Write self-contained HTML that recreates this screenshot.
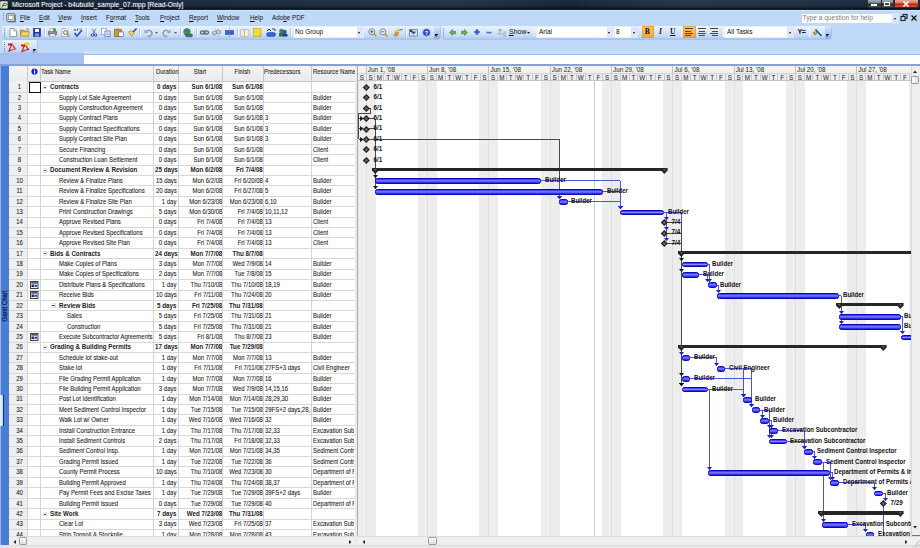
<!DOCTYPE html><html><head><meta charset="utf-8"><style>
*{margin:0;padding:0;box-sizing:border-box}
html,body{width:920px;height:548px;overflow:hidden;background:#c1d9f8;font-family:"Liberation Sans",sans-serif;position:relative}
.a{position:absolute}
svg.a{overflow:visible}
.t{position:absolute;white-space:nowrap;font-size:6px;color:#1a1a1a;line-height:10px}
.b{font-weight:bold}
.r{text-align:right}
.c{text-align:center}
.tt{font-size:6.5px;color:#222;transform:scaleX(.915);transform-origin:0 50%;-webkit-text-stroke:0.08px #222}
.tt.r{transform-origin:100% 50%}
.tt.c{transform-origin:50% 50%}
.tt.b{-webkit-text-stroke:0;transform:scaleX(.955)}

</style></head><body>
<div class="a" style="left:0;top:0;width:920px;height:10.2px;background:linear-gradient(#1f2f45,#1a293d 55%,#0c1524 85%,#1a2838)"></div>
<div class="a" style="left:0;top:0;width:920px;height:8px;background:linear-gradient(90deg,rgba(0,0,0,.15),rgba(255,255,255,0) 20%,rgba(255,255,255,.04) 50%,rgba(0,0,0,.1) 62%,rgba(255,255,255,.05) 75%,rgba(0,0,0,0))"></div>
<svg class="a" style="left:0.3px;top:0.8px" width="8" height="8" viewBox="0 0 8 8"><rect x="0.2" y="0.2" width="7.4" height="7.4" rx="0.8" fill="#dfe6cf"/><path d="M2 6.5L3.5 2.5H5.5A1 1 0 0 1 5.5 4.5H3" fill="none" stroke="#4a5a3a" stroke-width="1"/><path d="M0.5 7.2H7.5" stroke="#9aa88a" stroke-width="0.6"/></svg>
<div class="t" style="left:12px;top:0.3px;font-size:6.75px;color:#fff;line-height:10px;text-shadow:0 0 1.5px #567">Microsoft Project - b4ubuild_sample_07.mpp [Read-Only]</div>
<div class="a" style="left:867px;top:0;width:27px;height:8px;background:linear-gradient(#a8b0b8,#7a8490 40%,#202830 58%,#4a5560);border-radius:0 0 0 3px;border:0.6px solid #2a3038;border-top:0"></div>
<div class="a" style="left:880.5px;top:0;width:0.6px;height:8px;background:#1a2030"></div>
<div class="a" style="left:894px;top:0;width:25px;height:8px;background:linear-gradient(#eaa898,#dc7866 40%,#c01e0c 58%,#d05a48);border-radius:0 0 3px 0;border:0.6px solid #502020;border-top:0"></div>
<div class="a" style="left:871px;top:4.2px;width:6px;height:1.8px;background:#fff"></div>
<div class="a" style="left:884px;top:1.8px;width:5.5px;height:4.5px;border:1px solid #fff;border-top-width:1.5px"></div>
<svg class="a" style="left:902px;top:1px" width="8" height="6" viewBox="0 0 8 6"><path d="M1.5 0.5L6.5 5.5M6.5 0.5L1.5 5.5" stroke="#fff" stroke-width="1.6"/></svg>
<div class="a" style="left:0;top:10px;width:920px;height:14px;background:#c1d9f8"></div>
<div class="a" style="left:0;top:10.2px;width:920px;height:1.2px;background:#cfe3fb"></div>
<div class="t" style="left:20px;top:12.8px;font-size:7px;color:#111;line-height:10px;text-decoration-thickness:.5px;transform:scaleX(.9);transform-origin:0 50%"><u>F</u>ile</div>
<div class="t" style="left:38.6px;top:12.8px;font-size:7px;color:#111;line-height:10px;text-decoration-thickness:.5px;transform:scaleX(.9);transform-origin:0 50%"><u>E</u>dit</div>
<div class="t" style="left:58.2px;top:12.8px;font-size:7px;color:#111;line-height:10px;text-decoration-thickness:.5px;transform:scaleX(.9);transform-origin:0 50%"><u>V</u>iew</div>
<div class="t" style="left:80.7px;top:12.8px;font-size:7px;color:#111;line-height:10px;text-decoration-thickness:.5px;transform:scaleX(.9);transform-origin:0 50%"><u>I</u>nsert</div>
<div class="t" style="left:105.7px;top:12.8px;font-size:7px;color:#111;line-height:10px;text-decoration-thickness:.5px;transform:scaleX(.9);transform-origin:0 50%">F<u>o</u>rmat</div>
<div class="t" style="left:135.2px;top:12.8px;font-size:7px;color:#111;line-height:10px;text-decoration-thickness:.5px;transform:scaleX(.9);transform-origin:0 50%"><u>T</u>ools</div>
<div class="t" style="left:159.6px;top:12.8px;font-size:7px;color:#111;line-height:10px;text-decoration-thickness:.5px;transform:scaleX(.9);transform-origin:0 50%"><u>P</u>roject</div>
<div class="t" style="left:188.8px;top:12.8px;font-size:7px;color:#111;line-height:10px;text-decoration-thickness:.5px;transform:scaleX(.9);transform-origin:0 50%"><u>R</u>eport</div>
<div class="t" style="left:216.6px;top:12.8px;font-size:7px;color:#111;line-height:10px;text-decoration-thickness:.5px;transform:scaleX(.9);transform-origin:0 50%"><u>W</u>indow</div>
<div class="t" style="left:249.6px;top:12.8px;font-size:7px;color:#111;line-height:10px;text-decoration-thickness:.5px;transform:scaleX(.9);transform-origin:0 50%"><u>H</u>elp</div>
<div class="t" style="left:272px;top:12.8px;font-size:7px;color:#111;line-height:10px;text-decoration-thickness:.5px;transform:scaleX(.9);transform-origin:0 50%">Ado<u>b</u>e PDF</div>
<div class="a" style="left:3px;top:13px;width:1px;height:8px;background-image:linear-gradient(#7a90b0 50%,transparent 50%);background-size:1px 2px"></div>
<svg class="a" style="left:6px;top:12.5px" width="11" height="10" viewBox="0 0 11 10"><rect x="2" y="2" width="8" height="7.5" rx="0.8" fill="#7a90c0"/><rect x="0.8" y="0.8" width="8" height="7.5" rx="0.8" fill="#eef0e8" stroke="#3a4450" stroke-width="0.8"/><rect x="2.6" y="2.6" width="4.4" height="3.8" fill="#fff" stroke="#6a7a50" stroke-width="0.6"/><circle cx="3.6" cy="2.4" r="0.8" fill="#e0c040"/></svg>
<div class="a" style="left:801px;top:12.5px;width:91.5px;height:11px;background:#fff;border:0.5px solid #c6d6ee"></div>
<div class="t" style="left:802.5px;top:13.3px;font-size:6.6px;color:#7e7e7e;line-height:10px">Type a question for help</div>
<div class="a" style="left:892px;top:12.5px;width:7px;height:11px;background:#d7e5f8"></div>
<div class="a" style="left:894px;top:17.5px;width:0;height:0;border-left:1.6px solid transparent;border-right:1.6px solid transparent;border-top:2px solid #222"></div>
<svg class="a" style="left:900px;top:13px" width="8" height="9" viewBox="0 0 8 9"><rect x="3" y="1.5" width="4" height="4" fill="none" stroke="#222" stroke-width="1.1"/><rect x="1" y="3.5" width="4" height="4" fill="#c1d9f8" stroke="#222" stroke-width="1.1"/></svg>
<svg class="a" style="left:910px;top:14px" width="8" height="8" viewBox="0 0 8 8"><path d="M1.5 1.5L6.5 6.5M6.5 1.5L1.5 6.5" stroke="#111" stroke-width="1.3"/></svg>
<div class="a" style="left:0;top:24px;width:920px;height:30px;background:#c1d9f8"></div>
<div class="a" style="left:2px;top:25.5px;width:438px;height:13.0px;background:linear-gradient(#eaf3fe,#d6e6fb 45%,#c2d8f5 80%,#aac5ee);border-radius:2px;box-shadow:0.5px 0.5px 0 #90aee0"></div>
<div class="a" style="left:441px;top:25.5px;width:390px;height:13.0px;background:linear-gradient(#eaf3fe,#d6e6fb 45%,#c2d8f5 80%,#aac5ee);border-radius:2px;box-shadow:0.5px 0.5px 0 #90aee0"></div>
<div class="a" style="left:2px;top:40px;width:35px;height:13.299999999999997px;background:linear-gradient(#eaf3fe,#d6e6fb 45%,#c2d8f5 80%,#aac5ee);border-radius:2px;box-shadow:0.5px 0.5px 0 #90aee0"></div>
<div class="a" style="left:4px;top:27.5px;width:1px;height:9px;background-image:linear-gradient(#6f87ac 50%,transparent 50%);background-size:1px 2px"></div>
<div class="a" style="left:443px;top:27.5px;width:1px;height:9px;background-image:linear-gradient(#6f87ac 50%,transparent 50%);background-size:1px 2px"></div>
<div class="a" style="left:4px;top:42px;width:1px;height:9px;background-image:linear-gradient(#6f87ac 50%,transparent 50%);background-size:1px 2px"></div>
<div class="a" style="left:434px;top:26px;width:5.5px;height:12.5px;background:linear-gradient(#dae8fb,#8eaee2);border-radius:0 2px 2px 0"></div>
<div class="a" style="left:435.2px;top:35.0px;width:0;height:0;border-left:1.6px solid transparent;border-right:1.6px solid transparent;border-top:2px solid #111"></div>
<div class="a" style="left:435.2px;top:33.8px;width:3.2px;height:0.6px;background:#111"></div>
<div class="a" style="left:825px;top:26px;width:5.5px;height:12.5px;background:linear-gradient(#dae8fb,#8eaee2);border-radius:0 2px 2px 0"></div>
<div class="a" style="left:826.2px;top:35.0px;width:0;height:0;border-left:1.6px solid transparent;border-right:1.6px solid transparent;border-top:2px solid #111"></div>
<div class="a" style="left:826.2px;top:33.8px;width:3.2px;height:0.6px;background:#111"></div>
<div class="a" style="left:32px;top:47.5px;width:5.5px;height:5.8px;background:linear-gradient(#dae8fb,#8eaee2);border-radius:0 2px 2px 0"></div>
<div class="a" style="left:33.2px;top:49.8px;width:0;height:0;border-left:1.6px solid transparent;border-right:1.6px solid transparent;border-top:2px solid #111"></div>
<div class="a" style="left:33.2px;top:48.599999999999994px;width:3.2px;height:0.6px;background:#111"></div>
<div class="a" style="left:44.4px;top:28px;width:0.7px;height:9px;background:#b2c8ea"></div>
<div class="a" style="left:45.1px;top:28px;width:0.6px;height:9px;background:#fff"></div>
<div class="a" style="left:86px;top:28px;width:0.7px;height:9px;background:#b2c8ea"></div>
<div class="a" style="left:86.7px;top:28px;width:0.6px;height:9px;background:#fff"></div>
<div class="a" style="left:139.4px;top:28px;width:0.7px;height:9px;background:#b2c8ea"></div>
<div class="a" style="left:140.1px;top:28px;width:0.6px;height:9px;background:#fff"></div>
<div class="a" style="left:180px;top:28px;width:0.7px;height:9px;background:#b2c8ea"></div>
<div class="a" style="left:180.7px;top:28px;width:0.6px;height:9px;background:#fff"></div>
<div class="a" style="left:196px;top:28px;width:0.7px;height:9px;background:#b2c8ea"></div>
<div class="a" style="left:196.7px;top:28px;width:0.6px;height:9px;background:#fff"></div>
<div class="a" style="left:237px;top:28px;width:0.7px;height:9px;background:#b2c8ea"></div>
<div class="a" style="left:237.7px;top:28px;width:0.6px;height:9px;background:#fff"></div>
<div class="a" style="left:290px;top:28px;width:0.7px;height:9px;background:#b2c8ea"></div>
<div class="a" style="left:290.7px;top:28px;width:0.6px;height:9px;background:#fff"></div>
<div class="a" style="left:405px;top:28px;width:0.7px;height:9px;background:#b2c8ea"></div>
<div class="a" style="left:405.7px;top:28px;width:0.6px;height:9px;background:#fff"></div>
<div class="a" style="left:533.7px;top:28px;width:0.7px;height:9px;background:#b2c8ea"></div>
<div class="a" style="left:534.4000000000001px;top:28px;width:0.6px;height:9px;background:#fff"></div>
<div class="a" style="left:680.6px;top:28px;width:0.7px;height:9px;background:#b2c8ea"></div>
<div class="a" style="left:681.3000000000001px;top:28px;width:0.6px;height:9px;background:#fff"></div>
<div class="a" style="left:722.5px;top:28px;width:0.7px;height:9px;background:#b2c8ea"></div>
<div class="a" style="left:723.2px;top:28px;width:0.6px;height:9px;background:#fff"></div>
<div class="a" style="left:808.7px;top:28px;width:0.7px;height:9px;background:#b2c8ea"></div>
<div class="a" style="left:809.4000000000001px;top:28px;width:0.6px;height:9px;background:#fff"></div>
<svg class="a" style="left:8.5px;top:27.8px" width="8" height="9" viewBox="0 0 8 9"><path d="M1 0.5h4l2.5 2.5v5.5h-6.5z" fill="#fff" stroke="#7a7a7a" stroke-width="0.7"/><path d="M5 0.5v2.5h2.5" fill="#ddd" stroke="#7a7a7a" stroke-width="0.5"/></svg>
<svg class="a" style="left:19.5px;top:27.8px" width="10" height="9" viewBox="0 0 10 9"><path d="M0.5 2h3l1 1h4v5h-8z" fill="#e8b030" stroke="#9a7010" stroke-width="0.6"/><path d="M1.5 4h8l-1.5 4h-7.5z" fill="#f8d868" stroke="#b08020" stroke-width="0.5"/><path d="M6 1.5l2-1 1 2" fill="none" stroke="#4a8a30" stroke-width="0.7"/></svg>
<svg class="a" style="left:33px;top:27.8px" width="8" height="9" viewBox="0 0 8 9"><rect x="0.5" y="0.5" width="7" height="8" fill="#2838a8" stroke="#182070" stroke-width="0.6"/><rect x="2" y="1" width="4" height="3" fill="#fff"/><rect x="2" y="5.5" width="4" height="3" fill="#8898c8"/></svg>
<svg class="a" style="left:48px;top:27.8px" width="9" height="9" viewBox="0 0 9 9"><rect x="0.5" y="3" width="8" height="4" rx="1" fill="#909090" stroke="#505050" stroke-width="0.6"/><rect x="2" y="0.8" width="5" height="2.5" fill="#fff" stroke="#777" stroke-width="0.5"/><rect x="2" y="6" width="5" height="2.5" fill="#fff" stroke="#777" stroke-width="0.5"/><circle cx="6.5" cy="2" r="1.8" fill="#48a040"/></svg>
<svg class="a" style="left:61px;top:27.8px" width="9" height="9" viewBox="0 0 9 9"><path d="M1 0.5h4l2 2v6h-6z" fill="#fff" stroke="#888" stroke-width="0.6"/><circle cx="4.5" cy="4.5" r="2" fill="#e8eef8" stroke="#555" stroke-width="0.8"/><path d="M6 6l2.5 2.5" stroke="#c09020" stroke-width="1.3"/></svg>
<svg class="a" style="left:73px;top:27.8px" width="10" height="9" viewBox="0 0 10 9"><path d="M1 2.5l1-1.5 1 1.5M1.3 2h1.4M4 1h1.5M4.5 1v2M6.5 1h2" stroke="#333" stroke-width="0.6" fill="none"/><path d="M1.5 5l2.5 3 5-6" fill="none" stroke="#2a48c0" stroke-width="1.5"/></svg>
<svg class="a" style="left:90.5px;top:27.8px" width="6" height="9" viewBox="0 0 6 9"><path d="M1 0.5l3 5M5 0.5l-3 5" stroke="#555" stroke-width="0.7"/><circle cx="1.5" cy="7" r="1.3" fill="none" stroke="#2040b0" stroke-width="0.9"/><circle cx="4.5" cy="7" r="1.3" fill="none" stroke="#2040b0" stroke-width="0.9"/></svg>
<svg class="a" style="left:101px;top:27.8px" width="10" height="9" viewBox="0 0 10 9"><rect x="0.5" y="0.5" width="5" height="6" fill="#fff" stroke="#888" stroke-width="0.6"/><rect x="4" y="3" width="5" height="5.5" fill="#fff" stroke="#3a5ab8" stroke-width="0.7"/><path d="M5 5h3M5 6.5h3" stroke="#3a5ab8" stroke-width="0.5"/></svg>
<svg class="a" style="left:113.7px;top:27.8px" width="10" height="9" viewBox="0 0 10 9"><rect x="0.5" y="1.5" width="7" height="7" fill="#d89828" stroke="#805010" stroke-width="0.6"/><rect x="2" y="0.5" width="3" height="2" fill="#888"/><rect x="4.5" y="4" width="5" height="4.5" fill="#fff" stroke="#555" stroke-width="0.6"/></svg>
<svg class="a" style="left:127.5px;top:27.8px" width="9" height="9" viewBox="0 0 9 9"><path d="M0.5 4l3 4.5 3-3-3-3z" fill="#f0d060" stroke="#a08020" stroke-width="0.6"/><path d="M5 4l3.5-3.5" stroke="#2838a0" stroke-width="1.5"/></svg>
<svg class="a" style="left:143.7px;top:27.8px" width="9" height="9" viewBox="0 0 9 9"><path d="M2.5 3.5a3 3 0 1 1 1 4.5" fill="none" stroke="#8c9cb8" stroke-width="1.4"/><path d="M0.5 1.5v3.5h3.5z" fill="#8c9cb8"/></svg>
<svg class="a" style="left:155px;top:31.5px" width="3" height="2" viewBox="0 0 3 2"><path d="M0 0h3l-1.5 1.8z" fill="#556"/></svg>
<svg class="a" style="left:162px;top:27.8px" width="9" height="9" viewBox="0 0 9 9"><path d="M6.5 3.5a3 3 0 1 0 -1 4.5" fill="none" stroke="#8c9cb8" stroke-width="1.4"/><path d="M8.5 1.5v3.5h-3.5z" fill="#8c9cb8"/></svg>
<svg class="a" style="left:174px;top:31.5px" width="3" height="2" viewBox="0 0 3 2"><path d="M0 0h3l-1.5 1.8z" fill="#556"/></svg>
<svg class="a" style="left:183px;top:27.8px" width="10" height="9" viewBox="0 0 10 9"><circle cx="4" cy="3.8" r="3.3" fill="#38a048" stroke="#206030" stroke-width="0.5"/><path d="M1.5 2.5c1.5 1 3 0 5 1" stroke="#2a6ad0" stroke-width="1.2" fill="none"/><rect x="2.5" y="6" width="7" height="2.8" rx="1.4" fill="#5a6a88" stroke="#334" stroke-width="0.5"/></svg>
<svg class="a" style="left:200px;top:27.8px" width="9" height="9" viewBox="0 0 9 9"><ellipse cx="2.8" cy="4.5" rx="2.3" ry="1.6" fill="none" stroke="#5a6478" stroke-width="1.2"/><ellipse cx="6.2" cy="4.5" rx="2.3" ry="1.6" fill="none" stroke="#5a6478" stroke-width="1.2"/></svg>
<svg class="a" style="left:212px;top:27.8px" width="9" height="9" viewBox="0 0 9 9"><ellipse cx="2.5" cy="5" rx="2" ry="1.5" fill="none" stroke="#8a92a4" stroke-width="1.1"/><ellipse cx="6.5" cy="4" rx="2" ry="1.5" fill="none" stroke="#8a92a4" stroke-width="1.1"/><path d="M3 0.5l1 2M6 0.5l-1 2M2 8.5l1-1.5M7 8.5l-1-1.5" stroke="#8a92a4" stroke-width="0.6"/></svg>
<svg class="a" style="left:224.5px;top:27.8px" width="9" height="9" viewBox="0 0 9 9"><rect x="0.5" y="2.5" width="3.5" height="4" fill="#3a62c8" stroke="#203a88" stroke-width="0.5"/><rect x="5" y="2.5" width="3.5" height="4" fill="#3a62c8" stroke="#203a88" stroke-width="0.5"/><path d="M4.5 0v9" stroke="#334" stroke-width="0.5" stroke-dasharray="1 1"/></svg>
<svg class="a" style="left:240px;top:27.8px" width="9" height="9" viewBox="0 0 9 9"><path d="M0.5 1.5h3.8v7h-3.8zM4.5 1.5h3.8v7h-3.8z" fill="#f4f0e8" stroke="#b0a898" stroke-width="0.6"/></svg>
<svg class="a" style="left:253px;top:27.8px" width="9" height="9" viewBox="0 0 9 9"><rect x="0.5" y="0.5" width="7.5" height="8" fill="#f8d838" stroke="#c0a010" stroke-width="0.6"/><path d="M5.5 8.5l2.5-2.5v2.5z" fill="#e0b010"/></svg>
<svg class="a" style="left:265.5px;top:27.8px" width="10" height="9" viewBox="0 0 10 9"><path d="M1 3l2-2 2 2" fill="none" stroke="#222" stroke-width="1"/><path d="M6 1h3v2" fill="none" stroke="#222" stroke-width="0.8"/><rect x="0.5" y="4.5" width="9" height="4" rx="2" fill="#2a6ae0" stroke="#1a3a90" stroke-width="0.5"/></svg>
<svg class="a" style="left:278px;top:27.8px" width="10" height="9" viewBox="0 0 10 9"><circle cx="3.5" cy="3" r="2.3" fill="#38904a"/><circle cx="6.5" cy="4" r="2.3" fill="#3a5aa8"/><rect x="1" y="5" width="5" height="3.5" fill="#2a7038"/><rect x="5" y="6" width="4.5" height="2.5" fill="#2a3a90"/></svg>
<svg class="a" style="left:367.5px;top:27.8px" width="9" height="9" viewBox="0 0 9 9"><circle cx="3.8" cy="3.8" r="3" fill="#f0f4f8" stroke="#707a88" stroke-width="0.9"/><path d="M2.2 3.8h3.2M3.8 2.2v3.2" stroke="#2848a8" stroke-width="0.9"/><path d="M6 6l2.3 2.3" stroke="#d0a010" stroke-width="1.8"/></svg>
<svg class="a" style="left:379px;top:27.8px" width="9" height="9" viewBox="0 0 9 9"><circle cx="3.8" cy="3.8" r="3" fill="#f0f4f8" stroke="#707a88" stroke-width="0.9"/><path d="M2.2 3.8h3.2" stroke="#2848a8" stroke-width="0.9"/><path d="M6 6l2.3 2.3" stroke="#d0a010" stroke-width="1.8"/></svg>
<svg class="a" style="left:392.5px;top:27.8px" width="10" height="9" viewBox="0 0 10 9"><path d="M1 8l2-5 3 2-2 3z" fill="#d8a020" stroke="#907010" stroke-width="0.5"/><path d="M4 2.5l5.5-1" stroke="#3a5ab8" stroke-width="1.2"/><path d="M3 4l4-3" stroke="#f0c040" stroke-width="1.4"/></svg>
<svg class="a" style="left:408.7px;top:27.8px" width="9" height="9" viewBox="0 0 9 9"><rect x="0.5" y="1.5" width="8" height="6.5" fill="#dde4f0" stroke="#606878" stroke-width="0.7"/><path d="M1.5 3.5l3 3 3-3" fill="#3050b8"/><rect x="1" y="2" width="2.5" height="2" fill="#344"/></svg>
<svg class="a" style="left:421.5px;top:27.8px" width="9" height="9" viewBox="0 0 9 9"><circle cx="4.5" cy="4.5" r="3.8" fill="#2a4ac8" stroke="#9ab0e0" stroke-width="0.8"/><text x="4.5" y="6.6" font-size="5.5" font-family="Liberation Sans" font-weight="bold" fill="#fff" text-anchor="middle">?</text></svg>
<svg class="a" style="left:448.5px;top:29px" width="7" height="7" viewBox="0 0 7 7"><path d="M0.5 3.5l3-3v1.7h3v2.6h-3v1.7z" fill="#6ab048" stroke="#3a7020" stroke-width="0.5"/></svg>
<svg class="a" style="left:461px;top:29px" width="7" height="7" viewBox="0 0 7 7"><path d="M6.5 3.5l-3-3v1.7h-3v2.6h3v1.7z" fill="#6ab048" stroke="#3a7020" stroke-width="0.5"/></svg>
<svg class="a" style="left:473.5px;top:29.2px" width="6" height="6" viewBox="0 0 6 6"><path d="M2.2 0.5h1.6v1.7h1.7v1.6h-1.7v1.7h-1.6v-1.7h-1.7v-1.6h1.7z" fill="#2a5ad8" stroke="#1a3a98" stroke-width="0.4"/></svg>
<svg class="a" style="left:486.3px;top:29px" width="6" height="7" viewBox="0 0 6 7"><rect x="0.5" y="2.8" width="5" height="1.6" fill="#4a70d0"/></svg>
<svg class="a" style="left:497px;top:27.8px" width="10" height="9" viewBox="0 0 10 9"><path d="M1 3l2-2 2 2M3 1v4M0.5 6h5" stroke="#8a96aa" stroke-width="0.8" fill="none"/><path d="M6 4h3M6 6h3M6 8h3" stroke="#8a96aa" stroke-width="0.7"/></svg>
<div class="t" style="left:509px;top:27.3px;font-size:7px;color:#111;line-height:10px"><u>S</u>how</div>
<svg class="a" style="left:526.5px;top:31.5px" width="3" height="2" viewBox="0 0 3 2"><path d="M0 0h3l-1.5 1.8z" fill="#111"/></svg>
<div class="a" style="left:292.5px;top:26.2px;width:71px;height:12px;background:#fff;box-shadow:inset 0 0 0 0.5px #d4e0f0"></div>
<div class="t" style="left:295.0px;top:27.4px;font-size:7px;color:#111;line-height:10px;transform:scaleX(.93);transform-origin:0 50%">No Group</div>
<div class="a" style="left:356.5px;top:26.7px;width:6.5px;height:11px;background:#dbe8fa"></div>
<div class="a" style="left:358.2px;top:31.799999999999997px;width:0;height:0;border-left:1.6px solid transparent;border-right:1.6px solid transparent;border-top:2px solid #111"></div>
<div class="a" style="left:536px;top:26.2px;width:77.5px;height:12px;background:#fff;box-shadow:inset 0 0 0 0.5px #d4e0f0"></div>
<div class="t" style="left:538.5px;top:27.4px;font-size:7px;color:#111;line-height:10px;transform:scaleX(.93);transform-origin:0 50%">Arial</div>
<div class="a" style="left:606.5px;top:26.7px;width:6.5px;height:11px;background:#dbe8fa"></div>
<div class="a" style="left:608.2px;top:31.799999999999997px;width:0;height:0;border-left:1.6px solid transparent;border-right:1.6px solid transparent;border-top:2px solid #111"></div>
<div class="a" style="left:613.7px;top:26.2px;width:24.3px;height:12px;background:#fff;box-shadow:inset 0 0 0 0.5px #d4e0f0"></div>
<div class="t" style="left:616.2px;top:27.4px;font-size:7px;color:#111;line-height:10px;transform:scaleX(.93);transform-origin:0 50%">8</div>
<div class="a" style="left:631.0px;top:26.7px;width:6.5px;height:11px;background:#dbe8fa"></div>
<div class="a" style="left:632.7px;top:31.799999999999997px;width:0;height:0;border-left:1.6px solid transparent;border-right:1.6px solid transparent;border-top:2px solid #111"></div>
<div class="a" style="left:724px;top:26.2px;width:70px;height:12px;background:#fff;box-shadow:inset 0 0 0 0.5px #d4e0f0"></div>
<div class="t" style="left:726.5px;top:27.4px;font-size:7px;color:#111;line-height:10px;transform:scaleX(.93);transform-origin:0 50%">All Tasks</div>
<div class="a" style="left:787px;top:26.7px;width:6.5px;height:11px;background:#dbe8fa"></div>
<div class="a" style="left:788.7px;top:31.799999999999997px;width:0;height:0;border-left:1.6px solid transparent;border-right:1.6px solid transparent;border-top:2px solid #111"></div>
<div class="a" style="left:642px;top:26.2px;width:12px;height:12px;background:linear-gradient(#fcc46a,#f6a43a);box-shadow:inset 0 0 0 .5px #e0902a"></div>
<div class="t" style="left:644.8px;top:27.3px;font-size:7.5px;color:#111;line-height:10px;font-family:'Liberation Serif';font-weight:bold">B</div>
<div class="t" style="left:659px;top:27.3px;font-size:7.5px;color:#111;line-height:10px;font-style:italic;font-family:'Liberation Serif';font-weight:bold">I</div>
<div class="t" style="left:670px;top:27.3px;font-size:7.5px;color:#111;line-height:10px;text-decoration:underline;font-family:'Liberation Serif';font-weight:bold">U</div>
<div class="a" style="left:683px;top:26.2px;width:12.6px;height:12px;background:linear-gradient(#fcc46a,#f6a43a);box-shadow:inset 0 0 0 .5px #e0902a"></div>
<div class="a" style="left:685.3px;top:28.40px;width:7.5px;height:1.1px;background:#4a4a4a"></div>
<div class="a" style="left:685.3px;top:30.50px;width:5.5px;height:1.1px;background:#4a4a4a"></div>
<div class="a" style="left:685.3px;top:32.60px;width:7.5px;height:1.1px;background:#4a4a4a"></div>
<div class="a" style="left:685.3px;top:34.70px;width:5.5px;height:1.1px;background:#4a4a4a"></div>
<div class="a" style="left:698px;top:28.40px;width:7.5px;height:1.1px;background:#4a4a4a"></div>
<div class="a" style="left:699px;top:30.50px;width:5.5px;height:1.1px;background:#4a4a4a"></div>
<div class="a" style="left:698px;top:32.60px;width:7.5px;height:1.1px;background:#4a4a4a"></div>
<div class="a" style="left:699px;top:34.70px;width:5.5px;height:1.1px;background:#4a4a4a"></div>
<div class="a" style="left:710.3px;top:28.40px;width:7.5px;height:1.1px;background:#4a4a4a"></div>
<div class="a" style="left:712.3px;top:30.50px;width:5.5px;height:1.1px;background:#4a4a4a"></div>
<div class="a" style="left:710.3px;top:32.60px;width:7.5px;height:1.1px;background:#4a4a4a"></div>
<div class="a" style="left:712.3px;top:34.70px;width:5.5px;height:1.1px;background:#4a4a4a"></div>
<div class="t" style="left:797.5px;top:27.3px;font-size:7px;color:#111;line-height:10px;font-weight:bold;letter-spacing:-.5px">Y=</div>
<svg class="a" style="left:812px;top:27.8px" width="10" height="9" viewBox="0 0 10 9"><path d="M1 4.5l3.5-3 1.5 2-3.5 3z" fill="#f0c030"/><path d="M1.5 6.5l3-2.5 1 1.5-3 2z" fill="#48b048"/><path d="M3.5 1.5l6 6.5" stroke="#2838a0" stroke-width="1.3"/><path d="M1 5l2-1" stroke="#e04040" stroke-width="1"/></svg>
<svg class="a" style="left:6.5px;top:41.5px" width="10" height="10" viewBox="0 0 10 10"><path d="M1 2.5h5" stroke="#e01010" stroke-width="2"/><path d="M2 9c1-3 2-5 3-7 1 2 2 4 4 5-2 0-5 1-7 2z" fill="none" stroke="#d01818" stroke-width="1.1"/><rect x="5.5" y="1" width="3" height="7" fill="none" stroke="#c8c8c8" stroke-width="0.5"/></svg>
<svg class="a" style="left:19.5px;top:41.5px" width="10" height="10" viewBox="0 0 10 10"><path d="M1 3.5h4" stroke="#e01010" stroke-width="2"/><path d="M2 9.5c1-3 2-5 3-7 1 2 2 4 4 5-2 0-5 1-7 2z" fill="none" stroke="#d01818" stroke-width="1.1"/><ellipse cx="7" cy="2" rx="2.6" ry="1.8" fill="#f4d818"/></svg>
<div class="a" style="left:0;top:53.3px;width:920px;height:12px;background:#a5c2f2"></div>
<div class="a" style="left:83.7px;top:50.8px;width:836.3px;height:2.8px;background:#cde0fa"></div>
<div class="a" style="left:83.7px;top:53.6px;width:836.3px;height:1.6px;background:#9cbcf0"></div>
<div class="a" style="left:83.7px;top:55.3px;width:836.3px;height:9px;background:#fff"></div>
<div class="a" style="left:0;top:64.4px;width:920px;height:1.6px;background:#7ea4e0"></div>
<div class="a" style="left:0;top:66.0px;width:9px;height:479.0px;background:#4a7dd6"></div>
<div class="a" style="left:0;top:66.0px;width:0.7px;height:479.0px;background:#98b4e0"></div>
<div class="t" style="left:-14.3px;top:301.1px;width:38px;font-size:6.5px;color:#0a1a4a;line-height:10px;transform:rotate(-90deg) scaleX(.92);text-align:center;-webkit-text-stroke:.2px #0a1a4a">Gantt Chart</div>
<div class="a" style="left:0;top:395px;width:2.6px;height:31px;background:linear-gradient(90deg,#e8f6ff,#b8dcf0);border-radius:0 1px 1px 0"></div>
<div class="a" style="left:2.6px;top:395px;width:1.4px;height:31px;background:#1a3060"></div>
<div class="a" style="left:9px;top:66.0px;width:346px;height:470.0px;background:#fff"></div>
<div class="a" style="left:9px;top:66.0px;width:346px;height:15.299999999999997px;background:linear-gradient(#f4f4f4,#ebebeb)"></div>
<div class="a" style="left:9px;top:80.8px;width:346px;height:1.2px;background:#c4c4c4"></div>
<div class="a" style="left:27.4px;top:66.0px;width:1px;height:15.299999999999997px;background:#c8c8c8"></div>
<div class="a" style="left:40.1px;top:66.0px;width:1px;height:15.299999999999997px;background:#c8c8c8"></div>
<div class="a" style="left:152.9px;top:66.0px;width:1px;height:15.299999999999997px;background:#c8c8c8"></div>
<div class="t tt" style="left:41.2px;top:66.9px;width:111.5px;text-align:left">Task Name</div>
<div class="a" style="left:177.7px;top:66.0px;width:1px;height:15.299999999999997px;background:#c8c8c8"></div>
<div class="t tt c" style="left:154.7px;top:66.9px;width:22.5px;text-align:center">Duration</div>
<div class="a" style="left:221.6px;top:66.0px;width:1px;height:15.299999999999997px;background:#c8c8c8"></div>
<div class="t tt c" style="left:179.2px;top:66.9px;width:42.0px;text-align:center">Start</div>
<div class="a" style="left:262.7px;top:66.0px;width:1px;height:15.299999999999997px;background:#c8c8c8"></div>
<div class="t tt c" style="left:223.2px;top:66.9px;width:39.0px;text-align:center">Finish</div>
<div class="a" style="left:310.85px;top:66.0px;width:1px;height:15.299999999999997px;background:#c8c8c8"></div>
<div class="t tt" style="left:264.2px;top:66.9px;width:46.5px;text-align:left">Predecessors</div>
<div class="a" style="left:354.7px;top:66.0px;width:1px;height:15.299999999999997px;background:#c8c8c8"></div>
<div class="t tt" style="left:312.7px;top:66.9px;width:41.5px;text-align:left">Resource Name</div>
<svg class="a" style="left:30.5px;top:67.5px" width="7" height="7" viewBox="0 0 7 7"><circle cx="3.5" cy="3.5" r="3.1" fill="#1020e0"/><rect x="3" y="2.6" width="1.1" height="3" fill="#fff"/><rect x="3" y="1.3" width="1.1" height="0.9" fill="#fff"/></svg>
<div class="a" style="left:9px;top:81.3px;width:19px;height:454.7px;background:#f0f0f0"></div>
<div class="a" style="left:9px;top:91.71px;width:346px;height:1px;background:#d8d8d8"></div>
<div class="t tt c" style="left:9.8px;top:82.10px;width:19px">1</div>
<div class="a" style="left:42.6px;top:84.80px;width:4.6px;height:4.6px;border:0.5px solid #e2e2e2;background:#fff"></div>
<div class="a" style="left:43.7px;top:86.75px;width:2.4px;height:0.7px;background:#555"></div>
<div class="t tt b" style="left:50px;top:82.10px">Contracts</div>
<div class="t tt r b" style="left:153.5px;top:82.10px;width:22.4px">0 days</div>
<div class="t tt r b" style="left:178px;top:82.10px;width:44.3px">Sun 6/1/08</div>
<div class="t tt r b" style="left:222.5px;top:82.10px;width:39.8px">Sun 6/1/08</div>
<div class="t tt" style="left:265.4px;top:82.10px;width:50.8px;overflow:hidden"></div>
<div class="t tt" style="left:313.4px;top:82.10px;width:45.4px;overflow:hidden"></div>
<div class="a" style="left:9px;top:102.12px;width:346px;height:1px;background:#d8d8d8"></div>
<div class="t tt c" style="left:9.8px;top:92.51px;width:19px">2</div>
<div class="t tt" style="left:58.6px;top:92.51px">Supply Lot Sale Agreement</div>
<div class="t tt r" style="left:153.5px;top:92.51px;width:22.4px">0 days</div>
<div class="t tt r" style="left:178px;top:92.51px;width:44.3px">Sun 6/1/08</div>
<div class="t tt r" style="left:222.5px;top:92.51px;width:39.8px">Sun 6/1/08</div>
<div class="t tt" style="left:265.4px;top:92.51px;width:50.8px;overflow:hidden"></div>
<div class="t tt" style="left:313.4px;top:92.51px;width:45.4px;overflow:hidden">Builder</div>
<div class="a" style="left:9px;top:112.53px;width:346px;height:1px;background:#d8d8d8"></div>
<div class="t tt c" style="left:9.8px;top:102.92px;width:19px">3</div>
<div class="t tt" style="left:58.6px;top:102.92px">Supply Construction Agreement</div>
<div class="t tt r" style="left:153.5px;top:102.92px;width:22.4px">0 days</div>
<div class="t tt r" style="left:178px;top:102.92px;width:44.3px">Sun 6/1/08</div>
<div class="t tt r" style="left:222.5px;top:102.92px;width:39.8px">Sun 6/1/08</div>
<div class="t tt" style="left:265.4px;top:102.92px;width:50.8px;overflow:hidden"></div>
<div class="t tt" style="left:313.4px;top:102.92px;width:45.4px;overflow:hidden">Builder</div>
<div class="a" style="left:9px;top:122.94px;width:346px;height:1px;background:#d8d8d8"></div>
<div class="t tt c" style="left:9.8px;top:113.33px;width:19px">4</div>
<div class="t tt" style="left:58.6px;top:113.33px">Supply Contract Plans</div>
<div class="t tt r" style="left:153.5px;top:113.33px;width:22.4px">0 days</div>
<div class="t tt r" style="left:178px;top:113.33px;width:44.3px">Sun 6/1/08</div>
<div class="t tt r" style="left:222.5px;top:113.33px;width:39.8px">Sun 6/1/08</div>
<div class="t tt" style="left:265.4px;top:113.33px;width:50.8px;overflow:hidden">3</div>
<div class="t tt" style="left:313.4px;top:113.33px;width:45.4px;overflow:hidden">Builder</div>
<div class="a" style="left:9px;top:133.35px;width:346px;height:1px;background:#d8d8d8"></div>
<div class="t tt c" style="left:9.8px;top:123.74px;width:19px">5</div>
<div class="t tt" style="left:58.6px;top:123.74px">Supply Contract Specifications</div>
<div class="t tt r" style="left:153.5px;top:123.74px;width:22.4px">0 days</div>
<div class="t tt r" style="left:178px;top:123.74px;width:44.3px">Sun 6/1/08</div>
<div class="t tt r" style="left:222.5px;top:123.74px;width:39.8px">Sun 6/1/08</div>
<div class="t tt" style="left:265.4px;top:123.74px;width:50.8px;overflow:hidden">3</div>
<div class="t tt" style="left:313.4px;top:123.74px;width:45.4px;overflow:hidden">Builder</div>
<div class="a" style="left:9px;top:143.76px;width:346px;height:1px;background:#d8d8d8"></div>
<div class="t tt c" style="left:9.8px;top:134.15px;width:19px">6</div>
<div class="t tt" style="left:58.6px;top:134.15px">Supply Contract Site Plan</div>
<div class="t tt r" style="left:153.5px;top:134.15px;width:22.4px">0 days</div>
<div class="t tt r" style="left:178px;top:134.15px;width:44.3px">Sun 6/1/08</div>
<div class="t tt r" style="left:222.5px;top:134.15px;width:39.8px">Sun 6/1/08</div>
<div class="t tt" style="left:265.4px;top:134.15px;width:50.8px;overflow:hidden">3</div>
<div class="t tt" style="left:313.4px;top:134.15px;width:45.4px;overflow:hidden">Builder</div>
<div class="a" style="left:9px;top:154.17px;width:346px;height:1px;background:#d8d8d8"></div>
<div class="t tt c" style="left:9.8px;top:144.56px;width:19px">7</div>
<div class="t tt" style="left:58.6px;top:144.56px">Secure Financing</div>
<div class="t tt r" style="left:153.5px;top:144.56px;width:22.4px">0 days</div>
<div class="t tt r" style="left:178px;top:144.56px;width:44.3px">Sun 6/1/08</div>
<div class="t tt r" style="left:222.5px;top:144.56px;width:39.8px">Sun 6/1/08</div>
<div class="t tt" style="left:265.4px;top:144.56px;width:50.8px;overflow:hidden"></div>
<div class="t tt" style="left:313.4px;top:144.56px;width:45.4px;overflow:hidden">Client</div>
<div class="a" style="left:9px;top:164.58px;width:346px;height:1px;background:#d8d8d8"></div>
<div class="t tt c" style="left:9.8px;top:154.97px;width:19px">8</div>
<div class="t tt" style="left:58.6px;top:154.97px">Construction Loan Settlement</div>
<div class="t tt r" style="left:153.5px;top:154.97px;width:22.4px">0 days</div>
<div class="t tt r" style="left:178px;top:154.97px;width:44.3px">Sun 6/1/08</div>
<div class="t tt r" style="left:222.5px;top:154.97px;width:39.8px">Sun 6/1/08</div>
<div class="t tt" style="left:265.4px;top:154.97px;width:50.8px;overflow:hidden"></div>
<div class="t tt" style="left:313.4px;top:154.97px;width:45.4px;overflow:hidden">Client</div>
<div class="a" style="left:9px;top:174.99px;width:346px;height:1px;background:#d8d8d8"></div>
<div class="t tt c" style="left:9.8px;top:165.38px;width:19px">9</div>
<div class="a" style="left:42.6px;top:168.08px;width:4.6px;height:4.6px;border:0.5px solid #e2e2e2;background:#fff"></div>
<div class="a" style="left:43.7px;top:170.03px;width:2.4px;height:0.7px;background:#555"></div>
<div class="t tt b" style="left:50px;top:165.38px">Document Review & Revision</div>
<div class="t tt r b" style="left:153.5px;top:165.38px;width:22.4px">25 days</div>
<div class="t tt r b" style="left:178px;top:165.38px;width:44.3px">Mon 6/2/08</div>
<div class="t tt r b" style="left:222.5px;top:165.38px;width:39.8px">Fri 7/4/08</div>
<div class="t tt" style="left:265.4px;top:165.38px;width:50.8px;overflow:hidden"></div>
<div class="t tt" style="left:313.4px;top:165.38px;width:45.4px;overflow:hidden"></div>
<div class="a" style="left:9px;top:185.40px;width:346px;height:1px;background:#d8d8d8"></div>
<div class="t tt c" style="left:9.8px;top:175.79px;width:19px">10</div>
<div class="t tt" style="left:58.6px;top:175.79px">Review & Finalize Plans</div>
<div class="t tt r" style="left:153.5px;top:175.79px;width:22.4px">15 days</div>
<div class="t tt r" style="left:178px;top:175.79px;width:44.3px">Mon 6/2/08</div>
<div class="t tt r" style="left:222.5px;top:175.79px;width:39.8px">Fri 6/20/08</div>
<div class="t tt" style="left:265.4px;top:175.79px;width:50.8px;overflow:hidden">4</div>
<div class="t tt" style="left:313.4px;top:175.79px;width:45.4px;overflow:hidden">Builder</div>
<div class="a" style="left:9px;top:195.81px;width:346px;height:1px;background:#d8d8d8"></div>
<div class="t tt c" style="left:9.8px;top:186.20px;width:19px">11</div>
<div class="t tt" style="left:58.6px;top:186.20px">Review & Finalize Specifications</div>
<div class="t tt r" style="left:153.5px;top:186.20px;width:22.4px">20 days</div>
<div class="t tt r" style="left:178px;top:186.20px;width:44.3px">Mon 6/2/08</div>
<div class="t tt r" style="left:222.5px;top:186.20px;width:39.8px">Fri 6/27/08</div>
<div class="t tt" style="left:265.4px;top:186.20px;width:50.8px;overflow:hidden">5</div>
<div class="t tt" style="left:313.4px;top:186.20px;width:45.4px;overflow:hidden">Builder</div>
<div class="a" style="left:9px;top:206.22px;width:346px;height:1px;background:#d8d8d8"></div>
<div class="t tt c" style="left:9.8px;top:196.61px;width:19px">12</div>
<div class="t tt" style="left:58.6px;top:196.61px">Review & Finalize Site Plan</div>
<div class="t tt r" style="left:153.5px;top:196.61px;width:22.4px">1 day</div>
<div class="t tt r" style="left:178px;top:196.61px;width:44.3px">Mon 6/23/08</div>
<div class="t tt r" style="left:222.5px;top:196.61px;width:39.8px">Mon 6/23/08</div>
<div class="t tt" style="left:265.4px;top:196.61px;width:50.8px;overflow:hidden">6,10</div>
<div class="t tt" style="left:313.4px;top:196.61px;width:45.4px;overflow:hidden">Builder</div>
<div class="a" style="left:9px;top:216.63px;width:346px;height:1px;background:#d8d8d8"></div>
<div class="t tt c" style="left:9.8px;top:207.02px;width:19px">13</div>
<div class="t tt" style="left:58.6px;top:207.02px">Print Construction Drawings</div>
<div class="t tt r" style="left:153.5px;top:207.02px;width:22.4px">5 days</div>
<div class="t tt r" style="left:178px;top:207.02px;width:44.3px">Mon 6/30/08</div>
<div class="t tt r" style="left:222.5px;top:207.02px;width:39.8px">Fri 7/4/08</div>
<div class="t tt" style="left:265.4px;top:207.02px;width:50.8px;overflow:hidden">10,11,12</div>
<div class="t tt" style="left:313.4px;top:207.02px;width:45.4px;overflow:hidden">Builder</div>
<div class="a" style="left:9px;top:227.04px;width:346px;height:1px;background:#d8d8d8"></div>
<div class="t tt c" style="left:9.8px;top:217.43px;width:19px">14</div>
<div class="t tt" style="left:58.6px;top:217.43px">Approve Revised Plans</div>
<div class="t tt r" style="left:153.5px;top:217.43px;width:22.4px">0 days</div>
<div class="t tt r" style="left:178px;top:217.43px;width:44.3px">Fri 7/4/08</div>
<div class="t tt r" style="left:222.5px;top:217.43px;width:39.8px">Fri 7/4/08</div>
<div class="t tt" style="left:265.4px;top:217.43px;width:50.8px;overflow:hidden">13</div>
<div class="t tt" style="left:313.4px;top:217.43px;width:45.4px;overflow:hidden">Client</div>
<div class="a" style="left:9px;top:237.45px;width:346px;height:1px;background:#d8d8d8"></div>
<div class="t tt c" style="left:9.8px;top:227.84px;width:19px">15</div>
<div class="t tt" style="left:58.6px;top:227.84px">Approve Revised Specifications</div>
<div class="t tt r" style="left:153.5px;top:227.84px;width:22.4px">0 days</div>
<div class="t tt r" style="left:178px;top:227.84px;width:44.3px">Fri 7/4/08</div>
<div class="t tt r" style="left:222.5px;top:227.84px;width:39.8px">Fri 7/4/08</div>
<div class="t tt" style="left:265.4px;top:227.84px;width:50.8px;overflow:hidden">13</div>
<div class="t tt" style="left:313.4px;top:227.84px;width:45.4px;overflow:hidden">Client</div>
<div class="a" style="left:9px;top:247.86px;width:346px;height:1px;background:#d8d8d8"></div>
<div class="t tt c" style="left:9.8px;top:238.25px;width:19px">16</div>
<div class="t tt" style="left:58.6px;top:238.25px">Approve Revised Site Plan</div>
<div class="t tt r" style="left:153.5px;top:238.25px;width:22.4px">0 days</div>
<div class="t tt r" style="left:178px;top:238.25px;width:44.3px">Fri 7/4/08</div>
<div class="t tt r" style="left:222.5px;top:238.25px;width:39.8px">Fri 7/4/08</div>
<div class="t tt" style="left:265.4px;top:238.25px;width:50.8px;overflow:hidden">13</div>
<div class="t tt" style="left:313.4px;top:238.25px;width:45.4px;overflow:hidden">Client</div>
<div class="a" style="left:9px;top:258.27px;width:346px;height:1px;background:#d8d8d8"></div>
<div class="t tt c" style="left:9.8px;top:248.66px;width:19px">17</div>
<div class="a" style="left:42.6px;top:251.36px;width:4.6px;height:4.6px;border:0.5px solid #e2e2e2;background:#fff"></div>
<div class="a" style="left:43.7px;top:253.31px;width:2.4px;height:0.7px;background:#555"></div>
<div class="t tt b" style="left:50px;top:248.66px">Bids & Contracts</div>
<div class="t tt r b" style="left:153.5px;top:248.66px;width:22.4px">24 days</div>
<div class="t tt r b" style="left:178px;top:248.66px;width:44.3px">Mon 7/7/08</div>
<div class="t tt r b" style="left:222.5px;top:248.66px;width:39.8px">Thu 8/7/08</div>
<div class="t tt" style="left:265.4px;top:248.66px;width:50.8px;overflow:hidden"></div>
<div class="t tt" style="left:313.4px;top:248.66px;width:45.4px;overflow:hidden"></div>
<div class="a" style="left:9px;top:268.68px;width:346px;height:1px;background:#d8d8d8"></div>
<div class="t tt c" style="left:9.8px;top:259.07px;width:19px">18</div>
<div class="t tt" style="left:58.6px;top:259.07px">Make Copies of Plans</div>
<div class="t tt r" style="left:153.5px;top:259.07px;width:22.4px">3 days</div>
<div class="t tt r" style="left:178px;top:259.07px;width:44.3px">Mon 7/7/08</div>
<div class="t tt r" style="left:222.5px;top:259.07px;width:39.8px">Wed 7/9/08</div>
<div class="t tt" style="left:265.4px;top:259.07px;width:50.8px;overflow:hidden">14</div>
<div class="t tt" style="left:313.4px;top:259.07px;width:45.4px;overflow:hidden">Builder</div>
<div class="a" style="left:9px;top:279.09px;width:346px;height:1px;background:#d8d8d8"></div>
<div class="t tt c" style="left:9.8px;top:269.48px;width:19px">19</div>
<div class="t tt" style="left:58.6px;top:269.48px">Make Copies of Specifications</div>
<div class="t tt r" style="left:153.5px;top:269.48px;width:22.4px">2 days</div>
<div class="t tt r" style="left:178px;top:269.48px;width:44.3px">Mon 7/7/08</div>
<div class="t tt r" style="left:222.5px;top:269.48px;width:39.8px">Tue 7/8/08</div>
<div class="t tt" style="left:265.4px;top:269.48px;width:50.8px;overflow:hidden">15</div>
<div class="t tt" style="left:313.4px;top:269.48px;width:45.4px;overflow:hidden">Builder</div>
<div class="a" style="left:9px;top:289.50px;width:346px;height:1px;background:#d8d8d8"></div>
<div class="t tt c" style="left:9.8px;top:279.89px;width:19px">20</div>
<div class="t tt" style="left:58.6px;top:279.89px">Distribute Plans & Specifications</div>
<div class="t tt r" style="left:153.5px;top:279.89px;width:22.4px">1 day</div>
<div class="t tt r" style="left:178px;top:279.89px;width:44.3px">Thu 7/10/08</div>
<div class="t tt r" style="left:222.5px;top:279.89px;width:39.8px">Thu 7/10/08</div>
<div class="t tt" style="left:265.4px;top:279.89px;width:50.8px;overflow:hidden">18,19</div>
<div class="t tt" style="left:313.4px;top:279.89px;width:45.4px;overflow:hidden">Builder</div>
<svg class="a" style="left:30.3px;top:280.89px" width="8.5" height="8" viewBox="0 0 8.5 8"><rect x="0.5" y="0.5" width="7.5" height="7" fill="#eef0f6" stroke="#2a3040" stroke-width="0.9"/><rect x="1.3" y="1.2" width="6" height="1.4" fill="#2a3a6a"/><rect x="1.5" y="3.5" width="2.5" height="2.5" fill="#333"/><rect x="4.5" y="3.8" width="2.5" height="2" fill="#2040d0"/></svg>
<div class="a" style="left:9px;top:299.91px;width:346px;height:1px;background:#d8d8d8"></div>
<div class="t tt c" style="left:9.8px;top:290.30px;width:19px">21</div>
<div class="t tt" style="left:58.6px;top:290.30px">Receive Bids</div>
<div class="t tt r" style="left:153.5px;top:290.30px;width:22.4px">10 days</div>
<div class="t tt r" style="left:178px;top:290.30px;width:44.3px">Fri 7/11/08</div>
<div class="t tt r" style="left:222.5px;top:290.30px;width:39.8px">Thu 7/24/08</div>
<div class="t tt" style="left:265.4px;top:290.30px;width:50.8px;overflow:hidden">20</div>
<div class="t tt" style="left:313.4px;top:290.30px;width:45.4px;overflow:hidden">Builder</div>
<svg class="a" style="left:30.3px;top:291.30px" width="8.5" height="8" viewBox="0 0 8.5 8"><rect x="0.5" y="0.5" width="7.5" height="7" fill="#eef0f6" stroke="#2a3040" stroke-width="0.9"/><rect x="1.3" y="1.2" width="6" height="1.4" fill="#2a3a6a"/><rect x="1.5" y="3.5" width="2.5" height="2.5" fill="#333"/><rect x="4.5" y="3.8" width="2.5" height="2" fill="#2040d0"/></svg>
<div class="a" style="left:9px;top:310.32px;width:346px;height:1px;background:#d8d8d8"></div>
<div class="t tt c" style="left:9.8px;top:300.71px;width:19px">22</div>
<div class="a" style="left:51.1px;top:303.41px;width:4.6px;height:4.6px;border:0.5px solid #e2e2e2;background:#fff"></div>
<div class="a" style="left:52.2px;top:305.36px;width:2.4px;height:0.7px;background:#555"></div>
<div class="t tt b" style="left:58.6px;top:300.71px">Review Bids</div>
<div class="t tt r b" style="left:153.5px;top:300.71px;width:22.4px">5 days</div>
<div class="t tt r b" style="left:178px;top:300.71px;width:44.3px">Fri 7/25/08</div>
<div class="t tt r b" style="left:222.5px;top:300.71px;width:39.8px">Thu 7/31/08</div>
<div class="t tt" style="left:265.4px;top:300.71px;width:50.8px;overflow:hidden"></div>
<div class="t tt" style="left:313.4px;top:300.71px;width:45.4px;overflow:hidden"></div>
<div class="a" style="left:9px;top:320.73px;width:346px;height:1px;background:#d8d8d8"></div>
<div class="t tt c" style="left:9.8px;top:311.12px;width:19px">23</div>
<div class="t tt" style="left:67.4px;top:311.12px">Sales</div>
<div class="t tt r" style="left:153.5px;top:311.12px;width:22.4px">5 days</div>
<div class="t tt r" style="left:178px;top:311.12px;width:44.3px">Fri 7/25/08</div>
<div class="t tt r" style="left:222.5px;top:311.12px;width:39.8px">Thu 7/31/08</div>
<div class="t tt" style="left:265.4px;top:311.12px;width:50.8px;overflow:hidden">21</div>
<div class="t tt" style="left:313.4px;top:311.12px;width:45.4px;overflow:hidden">Builder</div>
<div class="a" style="left:9px;top:331.14px;width:346px;height:1px;background:#d8d8d8"></div>
<div class="t tt c" style="left:9.8px;top:321.53px;width:19px">24</div>
<div class="t tt" style="left:67.4px;top:321.53px">Construction</div>
<div class="t tt r" style="left:153.5px;top:321.53px;width:22.4px">5 days</div>
<div class="t tt r" style="left:178px;top:321.53px;width:44.3px">Fri 7/25/08</div>
<div class="t tt r" style="left:222.5px;top:321.53px;width:39.8px">Thu 7/31/08</div>
<div class="t tt" style="left:265.4px;top:321.53px;width:50.8px;overflow:hidden">21</div>
<div class="t tt" style="left:313.4px;top:321.53px;width:45.4px;overflow:hidden">Builder</div>
<div class="a" style="left:9px;top:341.55px;width:346px;height:1px;background:#d8d8d8"></div>
<div class="t tt c" style="left:9.8px;top:331.94px;width:19px">25</div>
<div class="t tt" style="left:58.6px;top:331.94px">Execute Subcontractor Agreements</div>
<div class="t tt r" style="left:153.5px;top:331.94px;width:22.4px">5 days</div>
<div class="t tt r" style="left:178px;top:331.94px;width:44.3px">Fri 8/1/08</div>
<div class="t tt r" style="left:222.5px;top:331.94px;width:39.8px">Thu 8/7/08</div>
<div class="t tt" style="left:265.4px;top:331.94px;width:50.8px;overflow:hidden">23</div>
<div class="t tt" style="left:313.4px;top:331.94px;width:45.4px;overflow:hidden">Builder</div>
<svg class="a" style="left:30.3px;top:332.94px" width="8.5" height="8" viewBox="0 0 8.5 8"><rect x="0.5" y="0.5" width="7.5" height="7" fill="#eef0f6" stroke="#2a3040" stroke-width="0.9"/><rect x="1.3" y="1.2" width="6" height="1.4" fill="#2a3a6a"/><rect x="1.5" y="3.5" width="2.5" height="2.5" fill="#333"/><rect x="4.5" y="3.8" width="2.5" height="2" fill="#2040d0"/></svg>
<div class="a" style="left:9px;top:351.96px;width:346px;height:1px;background:#d8d8d8"></div>
<div class="t tt c" style="left:9.8px;top:342.35px;width:19px">26</div>
<div class="a" style="left:42.6px;top:345.05px;width:4.6px;height:4.6px;border:0.5px solid #e2e2e2;background:#fff"></div>
<div class="a" style="left:43.7px;top:347.00px;width:2.4px;height:0.7px;background:#555"></div>
<div class="t tt b" style="left:50px;top:342.35px">Grading & Building Permits</div>
<div class="t tt r b" style="left:153.5px;top:342.35px;width:22.4px">17 days</div>
<div class="t tt r b" style="left:178px;top:342.35px;width:44.3px">Mon 7/7/08</div>
<div class="t tt r b" style="left:222.5px;top:342.35px;width:39.8px">Tue 7/29/08</div>
<div class="t tt" style="left:265.4px;top:342.35px;width:50.8px;overflow:hidden"></div>
<div class="t tt" style="left:313.4px;top:342.35px;width:45.4px;overflow:hidden"></div>
<div class="a" style="left:9px;top:362.37px;width:346px;height:1px;background:#d8d8d8"></div>
<div class="t tt c" style="left:9.8px;top:352.76px;width:19px">27</div>
<div class="t tt" style="left:58.6px;top:352.76px">Schedule lot stake-out</div>
<div class="t tt r" style="left:153.5px;top:352.76px;width:22.4px">1 day</div>
<div class="t tt r" style="left:178px;top:352.76px;width:44.3px">Mon 7/7/08</div>
<div class="t tt r" style="left:222.5px;top:352.76px;width:39.8px">Mon 7/7/08</div>
<div class="t tt" style="left:265.4px;top:352.76px;width:50.8px;overflow:hidden">13</div>
<div class="t tt" style="left:313.4px;top:352.76px;width:45.4px;overflow:hidden">Builder</div>
<div class="a" style="left:9px;top:372.78px;width:346px;height:1px;background:#d8d8d8"></div>
<div class="t tt c" style="left:9.8px;top:363.17px;width:19px">28</div>
<div class="t tt" style="left:58.6px;top:363.17px">Stake lot</div>
<div class="t tt r" style="left:153.5px;top:363.17px;width:22.4px">1 day</div>
<div class="t tt r" style="left:178px;top:363.17px;width:44.3px">Fri 7/11/08</div>
<div class="t tt r" style="left:222.5px;top:363.17px;width:39.8px">Fri 7/11/08</div>
<div class="t tt" style="left:265.4px;top:363.17px;width:50.8px;overflow:hidden">27FS+3 days</div>
<div class="t tt" style="left:313.4px;top:363.17px;width:45.4px;overflow:hidden">Civil Engineer</div>
<div class="a" style="left:9px;top:383.19px;width:346px;height:1px;background:#d8d8d8"></div>
<div class="t tt c" style="left:9.8px;top:373.58px;width:19px">29</div>
<div class="t tt" style="left:58.6px;top:373.58px">File Grading Permit Application</div>
<div class="t tt r" style="left:153.5px;top:373.58px;width:22.4px">1 day</div>
<div class="t tt r" style="left:178px;top:373.58px;width:44.3px">Mon 7/7/08</div>
<div class="t tt r" style="left:222.5px;top:373.58px;width:39.8px">Mon 7/7/08</div>
<div class="t tt" style="left:265.4px;top:373.58px;width:50.8px;overflow:hidden">16</div>
<div class="t tt" style="left:313.4px;top:373.58px;width:45.4px;overflow:hidden">Builder</div>
<div class="a" style="left:9px;top:393.60px;width:346px;height:1px;background:#d8d8d8"></div>
<div class="t tt c" style="left:9.8px;top:383.99px;width:19px">30</div>
<div class="t tt" style="left:58.6px;top:383.99px">File Building Permit Application</div>
<div class="t tt r" style="left:153.5px;top:383.99px;width:22.4px">3 days</div>
<div class="t tt r" style="left:178px;top:383.99px;width:44.3px">Mon 7/7/08</div>
<div class="t tt r" style="left:222.5px;top:383.99px;width:39.8px">Wed 7/9/08</div>
<div class="t tt" style="left:265.4px;top:383.99px;width:50.8px;overflow:hidden">14,15,16</div>
<div class="t tt" style="left:313.4px;top:383.99px;width:45.4px;overflow:hidden">Builder</div>
<div class="a" style="left:9px;top:404.01px;width:346px;height:1px;background:#d8d8d8"></div>
<div class="t tt c" style="left:9.8px;top:394.40px;width:19px">31</div>
<div class="t tt" style="left:58.6px;top:394.40px">Post Lot Identification</div>
<div class="t tt r" style="left:153.5px;top:394.40px;width:22.4px">1 day</div>
<div class="t tt r" style="left:178px;top:394.40px;width:44.3px">Mon 7/14/08</div>
<div class="t tt r" style="left:222.5px;top:394.40px;width:39.8px">Mon 7/14/08</div>
<div class="t tt" style="left:265.4px;top:394.40px;width:50.8px;overflow:hidden">28,29,30</div>
<div class="t tt" style="left:313.4px;top:394.40px;width:45.4px;overflow:hidden">Builder</div>
<div class="a" style="left:9px;top:414.42px;width:346px;height:1px;background:#d8d8d8"></div>
<div class="t tt c" style="left:9.8px;top:404.81px;width:19px">32</div>
<div class="t tt" style="left:58.6px;top:404.81px">Meet Sediment Control Inspector</div>
<div class="t tt r" style="left:153.5px;top:404.81px;width:22.4px">1 day</div>
<div class="t tt r" style="left:178px;top:404.81px;width:44.3px">Tue 7/15/08</div>
<div class="t tt r" style="left:222.5px;top:404.81px;width:39.8px">Tue 7/15/08</div>
<div class="t tt" style="left:265.4px;top:404.81px;width:50.8px;overflow:hidden">29FS+2 days,28,</div>
<div class="t tt" style="left:313.4px;top:404.81px;width:45.4px;overflow:hidden">Builder</div>
<div class="a" style="left:9px;top:424.83px;width:346px;height:1px;background:#d8d8d8"></div>
<div class="t tt c" style="left:9.8px;top:415.22px;width:19px">33</div>
<div class="t tt" style="left:58.6px;top:415.22px">Walk Lot w/ Owner</div>
<div class="t tt r" style="left:153.5px;top:415.22px;width:22.4px">1 day</div>
<div class="t tt r" style="left:178px;top:415.22px;width:44.3px">Wed 7/16/08</div>
<div class="t tt r" style="left:222.5px;top:415.22px;width:39.8px">Wed 7/16/08</div>
<div class="t tt" style="left:265.4px;top:415.22px;width:50.8px;overflow:hidden">32</div>
<div class="t tt" style="left:313.4px;top:415.22px;width:45.4px;overflow:hidden">Builder</div>
<div class="a" style="left:9px;top:435.24px;width:346px;height:1px;background:#d8d8d8"></div>
<div class="t tt c" style="left:9.8px;top:425.63px;width:19px">34</div>
<div class="t tt" style="left:58.6px;top:425.63px">Install Construction Entrance</div>
<div class="t tt r" style="left:153.5px;top:425.63px;width:22.4px">1 day</div>
<div class="t tt r" style="left:178px;top:425.63px;width:44.3px">Thu 7/17/08</div>
<div class="t tt r" style="left:222.5px;top:425.63px;width:39.8px">Thu 7/17/08</div>
<div class="t tt" style="left:265.4px;top:425.63px;width:50.8px;overflow:hidden">32,33</div>
<div class="t tt" style="left:313.4px;top:425.63px;width:45.4px;overflow:hidden">Excavation Sub</div>
<div class="a" style="left:9px;top:445.65px;width:346px;height:1px;background:#d8d8d8"></div>
<div class="t tt c" style="left:9.8px;top:436.04px;width:19px">35</div>
<div class="t tt" style="left:58.6px;top:436.04px">Install Sediment Controls</div>
<div class="t tt r" style="left:153.5px;top:436.04px;width:22.4px">2 days</div>
<div class="t tt r" style="left:178px;top:436.04px;width:44.3px">Thu 7/17/08</div>
<div class="t tt r" style="left:222.5px;top:436.04px;width:39.8px">Fri 7/18/08</div>
<div class="t tt" style="left:265.4px;top:436.04px;width:50.8px;overflow:hidden">32,33</div>
<div class="t tt" style="left:313.4px;top:436.04px;width:45.4px;overflow:hidden">Excavation Sub</div>
<div class="a" style="left:9px;top:456.06px;width:346px;height:1px;background:#d8d8d8"></div>
<div class="t tt c" style="left:9.8px;top:446.45px;width:19px">36</div>
<div class="t tt" style="left:58.6px;top:446.45px">Sediment Control Insp.</div>
<div class="t tt r" style="left:153.5px;top:446.45px;width:22.4px">1 day</div>
<div class="t tt r" style="left:178px;top:446.45px;width:44.3px">Mon 7/21/08</div>
<div class="t tt r" style="left:222.5px;top:446.45px;width:39.8px">Mon 7/21/08</div>
<div class="t tt" style="left:265.4px;top:446.45px;width:50.8px;overflow:hidden">34,35</div>
<div class="t tt" style="left:313.4px;top:446.45px;width:45.4px;overflow:hidden">Sediment Contr</div>
<div class="a" style="left:9px;top:466.47px;width:346px;height:1px;background:#d8d8d8"></div>
<div class="t tt c" style="left:9.8px;top:456.86px;width:19px">37</div>
<div class="t tt" style="left:58.6px;top:456.86px">Grading Permit Issued</div>
<div class="t tt r" style="left:153.5px;top:456.86px;width:22.4px">1 day</div>
<div class="t tt r" style="left:178px;top:456.86px;width:44.3px">Tue 7/22/08</div>
<div class="t tt r" style="left:222.5px;top:456.86px;width:39.8px">Tue 7/22/08</div>
<div class="t tt" style="left:265.4px;top:456.86px;width:50.8px;overflow:hidden">36</div>
<div class="t tt" style="left:313.4px;top:456.86px;width:45.4px;overflow:hidden">Sediment Contr</div>
<div class="a" style="left:9px;top:476.88px;width:346px;height:1px;background:#d8d8d8"></div>
<div class="t tt c" style="left:9.8px;top:467.27px;width:19px">38</div>
<div class="t tt" style="left:58.6px;top:467.27px">County Permit Process</div>
<div class="t tt r" style="left:153.5px;top:467.27px;width:22.4px">10 days</div>
<div class="t tt r" style="left:178px;top:467.27px;width:44.3px">Thu 7/10/08</div>
<div class="t tt r" style="left:222.5px;top:467.27px;width:39.8px">Wed 7/23/08</div>
<div class="t tt" style="left:265.4px;top:467.27px;width:50.8px;overflow:hidden">30</div>
<div class="t tt" style="left:313.4px;top:467.27px;width:45.4px;overflow:hidden">Department of F</div>
<div class="a" style="left:9px;top:487.29px;width:346px;height:1px;background:#d8d8d8"></div>
<div class="t tt c" style="left:9.8px;top:477.68px;width:19px">39</div>
<div class="t tt" style="left:58.6px;top:477.68px">Building Permit Approved</div>
<div class="t tt r" style="left:153.5px;top:477.68px;width:22.4px">1 day</div>
<div class="t tt r" style="left:178px;top:477.68px;width:44.3px">Thu 7/24/08</div>
<div class="t tt r" style="left:222.5px;top:477.68px;width:39.8px">Thu 7/24/08</div>
<div class="t tt" style="left:265.4px;top:477.68px;width:50.8px;overflow:hidden">38,37</div>
<div class="t tt" style="left:313.4px;top:477.68px;width:45.4px;overflow:hidden">Department of F</div>
<div class="a" style="left:9px;top:497.70px;width:346px;height:1px;background:#d8d8d8"></div>
<div class="t tt c" style="left:9.8px;top:488.09px;width:19px">40</div>
<div class="t tt" style="left:58.6px;top:488.09px">Pay Permit Fees and Excise Taxes</div>
<div class="t tt r" style="left:153.5px;top:488.09px;width:22.4px">1 day</div>
<div class="t tt r" style="left:178px;top:488.09px;width:44.3px">Tue 7/29/08</div>
<div class="t tt r" style="left:222.5px;top:488.09px;width:39.8px">Tue 7/29/08</div>
<div class="t tt" style="left:265.4px;top:488.09px;width:50.8px;overflow:hidden">39FS+2 days</div>
<div class="t tt" style="left:313.4px;top:488.09px;width:45.4px;overflow:hidden">Builder</div>
<div class="a" style="left:9px;top:508.11px;width:346px;height:1px;background:#d8d8d8"></div>
<div class="t tt c" style="left:9.8px;top:498.50px;width:19px">41</div>
<div class="t tt" style="left:58.6px;top:498.50px">Building Permit Issued</div>
<div class="t tt r" style="left:153.5px;top:498.50px;width:22.4px">0 days</div>
<div class="t tt r" style="left:178px;top:498.50px;width:44.3px">Tue 7/29/08</div>
<div class="t tt r" style="left:222.5px;top:498.50px;width:39.8px">Tue 7/29/08</div>
<div class="t tt" style="left:265.4px;top:498.50px;width:50.8px;overflow:hidden">40</div>
<div class="t tt" style="left:313.4px;top:498.50px;width:45.4px;overflow:hidden">Department of F</div>
<div class="a" style="left:9px;top:518.52px;width:346px;height:1px;background:#d8d8d8"></div>
<div class="t tt c" style="left:9.8px;top:508.91px;width:19px">42</div>
<div class="a" style="left:42.6px;top:511.61px;width:4.6px;height:4.6px;border:0.5px solid #e2e2e2;background:#fff"></div>
<div class="a" style="left:43.7px;top:513.56px;width:2.4px;height:0.7px;background:#555"></div>
<div class="t tt b" style="left:50px;top:508.91px">Site Work</div>
<div class="t tt r b" style="left:153.5px;top:508.91px;width:22.4px">7 days</div>
<div class="t tt r b" style="left:178px;top:508.91px;width:44.3px">Wed 7/23/08</div>
<div class="t tt r b" style="left:222.5px;top:508.91px;width:39.8px">Thu 7/31/08</div>
<div class="t tt" style="left:265.4px;top:508.91px;width:50.8px;overflow:hidden"></div>
<div class="t tt" style="left:313.4px;top:508.91px;width:45.4px;overflow:hidden"></div>
<div class="a" style="left:9px;top:528.93px;width:346px;height:1px;background:#d8d8d8"></div>
<div class="t tt c" style="left:9.8px;top:519.32px;width:19px">43</div>
<div class="t tt" style="left:58.6px;top:519.32px">Clear Lot</div>
<div class="t tt r" style="left:153.5px;top:519.32px;width:22.4px">3 days</div>
<div class="t tt r" style="left:178px;top:519.32px;width:44.3px">Wed 7/23/08</div>
<div class="t tt r" style="left:222.5px;top:519.32px;width:39.8px">Fri 7/25/08</div>
<div class="t tt" style="left:265.4px;top:519.32px;width:50.8px;overflow:hidden">37</div>
<div class="t tt" style="left:313.4px;top:519.32px;width:45.4px;overflow:hidden">Excavation Sub</div>
<div class="a" style="left:9px;top:539.34px;width:346px;height:1px;background:#d8d8d8"></div>
<div class="t tt c" style="left:9.8px;top:529.73px;width:19px">44</div>
<div class="t tt" style="left:58.6px;top:529.73px">Strip Topsoil & Stockpile</div>
<div class="t tt r" style="left:153.5px;top:529.73px;width:22.4px">1 day</div>
<div class="t tt r" style="left:178px;top:529.73px;width:44.3px">Mon 7/28/08</div>
<div class="t tt r" style="left:222.5px;top:529.73px;width:39.8px">Mon 7/28/08</div>
<div class="t tt" style="left:265.4px;top:529.73px;width:50.8px;overflow:hidden">43</div>
<div class="t tt" style="left:313.4px;top:529.73px;width:45.4px;overflow:hidden">Excavation Sub</div>
<div class="a" style="left:27.4px;top:81.3px;width:1px;height:454.7px;background:#d4d4d4"></div>
<div class="a" style="left:40.1px;top:81.3px;width:1px;height:454.7px;background:#d4d4d4"></div>
<div class="a" style="left:152.9px;top:81.3px;width:1px;height:454.7px;background:#d4d4d4"></div>
<div class="a" style="left:177.7px;top:81.3px;width:1px;height:454.7px;background:#d4d4d4"></div>
<div class="a" style="left:221.6px;top:81.3px;width:1px;height:454.7px;background:#d4d4d4"></div>
<div class="a" style="left:262.7px;top:81.3px;width:1px;height:454.7px;background:#d4d4d4"></div>
<div class="a" style="left:310.85px;top:81.3px;width:1px;height:454.7px;background:#d4d4d4"></div>
<div class="a" style="left:354.7px;top:81.3px;width:1px;height:454.7px;background:#d4d4d4"></div>
<div class="a" style="left:29.0px;top:81.80px;width:11.8px;height:11.01px;border:1.3px solid #111"></div>
<div class="a" style="left:355px;top:66.0px;width:1.8000000000000114px;height:480.0px;background:#ececec"></div>
<div class="a" style="left:356.8px;top:66.0px;width:1.2px;height:480.0px;background:#a8a8a8"></div>
<div class="a" style="left:358.0px;top:81.3px;width:552.6px;height:454.7px;background:#fff;overflow:hidden">
<div class="a" style="left:-62.48px;top:0;width:18.72px;height:454.7px;background:#ededed"></div><div class="a" style="left:-53.62px;top:0;width:0.8px;height:454.7px;background:#e0e0e0"></div><div class="a" style="left:-1.16px;top:0;width:18.72px;height:454.7px;background:#ededed"></div><div class="a" style="left:7.70px;top:0;width:0.8px;height:454.7px;background:#e0e0e0"></div><div class="a" style="left:60.16px;top:0;width:18.72px;height:454.7px;background:#ededed"></div><div class="a" style="left:69.02px;top:0;width:0.8px;height:454.7px;background:#e0e0e0"></div><div class="a" style="left:121.48px;top:0;width:18.72px;height:454.7px;background:#ededed"></div><div class="a" style="left:130.34px;top:0;width:0.8px;height:454.7px;background:#e0e0e0"></div><div class="a" style="left:182.80px;top:0;width:18.72px;height:454.7px;background:#ededed"></div><div class="a" style="left:191.66px;top:0;width:0.8px;height:454.7px;background:#e0e0e0"></div><div class="a" style="left:244.12px;top:0;width:18.72px;height:454.7px;background:#ededed"></div><div class="a" style="left:252.98px;top:0;width:0.8px;height:454.7px;background:#e0e0e0"></div><div class="a" style="left:305.44px;top:0;width:18.72px;height:454.7px;background:#ededed"></div><div class="a" style="left:314.30px;top:0;width:0.8px;height:454.7px;background:#e0e0e0"></div><div class="a" style="left:366.76px;top:0;width:18.72px;height:454.7px;background:#ededed"></div><div class="a" style="left:375.62px;top:0;width:0.8px;height:454.7px;background:#e0e0e0"></div><div class="a" style="left:428.08px;top:0;width:18.72px;height:454.7px;background:#ededed"></div><div class="a" style="left:436.94px;top:0;width:0.8px;height:454.7px;background:#e0e0e0"></div><div class="a" style="left:489.40px;top:0;width:18.72px;height:454.7px;background:#ededed"></div><div class="a" style="left:498.26px;top:0;width:0.8px;height:454.7px;background:#e0e0e0"></div><div class="a" style="left:550.72px;top:0;width:18.72px;height:454.7px;background:#ededed"></div><div class="a" style="left:559.58px;top:0;width:0.8px;height:454.7px;background:#e0e0e0"></div><div class="a" style="left:236.30px;top:0;width:1px;height:454.7px;background:#cfcfcf"></div><div class="a" style="left:10.70px;top:26.33px;width:2.00px;height:1px;background:#484848"></div><div class="a" style="left:12.20px;top:26.83px;width:1px;height:5.21px;background:#484848"></div><div class="a" style="left:1.30px;top:31.53px;width:11.40px;height:1px;background:#484848"></div><div class="a" style="left:0.10px;top:32.03px;width:1px;height:5.21px;background:#484848"></div><div class="a" style="left:0.60px;top:36.74px;width:2.60px;height:1px;background:#484848"></div><div class="a" style="left:10.70px;top:26.33px;width:2.00px;height:1px;background:#484848"></div><div class="a" style="left:12.20px;top:26.83px;width:1px;height:5.21px;background:#484848"></div><div class="a" style="left:1.30px;top:31.53px;width:11.40px;height:1px;background:#484848"></div><div class="a" style="left:0.10px;top:32.03px;width:1px;height:15.62px;background:#484848"></div><div class="a" style="left:0.60px;top:47.15px;width:2.60px;height:1px;background:#484848"></div><div class="a" style="left:10.70px;top:26.33px;width:2.00px;height:1px;background:#484848"></div><div class="a" style="left:12.20px;top:26.83px;width:1px;height:5.21px;background:#484848"></div><div class="a" style="left:1.30px;top:31.53px;width:11.40px;height:1px;background:#484848"></div><div class="a" style="left:0.10px;top:32.03px;width:1px;height:26.02px;background:#484848"></div><div class="a" style="left:0.60px;top:57.56px;width:2.60px;height:1px;background:#484848"></div><div class="a" style="left:10.70px;top:36.74px;width:6.41px;height:1px;background:#484848"></div><div class="a" style="left:16.61px;top:37.24px;width:1px;height:57.36px;background:#484848"></div><div class="a" style="left:10.70px;top:47.15px;width:6.41px;height:1px;background:#484848"></div><div class="a" style="left:16.61px;top:47.65px;width:1px;height:57.36px;background:#484848"></div><div class="a" style="left:10.70px;top:57.56px;width:190.37px;height:1px;background:#484848"></div><div class="a" style="left:200.57px;top:58.06px;width:1px;height:57.36px;background:#484848"></div><div class="a" style="left:183.40px;top:99.20px;width:17.67px;height:1px;background:#5252d8"></div><div class="a" style="left:200.57px;top:99.70px;width:1px;height:15.72px;background:#5252d8"></div><div class="a" style="left:183.40px;top:99.20px;width:78.99px;height:1px;background:#5252d8"></div><div class="a" style="left:261.89px;top:99.70px;width:1px;height:26.13px;background:#5252d8"></div><div class="a" style="left:244.72px;top:109.61px;width:17.67px;height:1px;background:#5252d8"></div><div class="a" style="left:261.89px;top:110.11px;width:1px;height:15.72px;background:#5252d8"></div><div class="a" style="left:209.68px;top:120.02px;width:52.71px;height:1px;background:#5252d8"></div><div class="a" style="left:261.89px;top:120.52px;width:1px;height:5.31px;background:#5252d8"></div><div class="a" style="left:306.04px;top:130.43px;width:2.00px;height:1px;background:#5252d8"></div><div class="a" style="left:307.54px;top:130.93px;width:1px;height:5.31px;background:#5252d8"></div><div class="a" style="left:306.04px;top:130.43px;width:2.00px;height:1px;background:#5252d8"></div><div class="a" style="left:307.54px;top:130.93px;width:1px;height:15.72px;background:#5252d8"></div><div class="a" style="left:306.04px;top:130.43px;width:2.00px;height:1px;background:#5252d8"></div><div class="a" style="left:307.54px;top:130.93px;width:1px;height:26.13px;background:#5252d8"></div><div class="a" style="left:308.54px;top:140.84px;width:15.17px;height:1px;background:#484848"></div><div class="a" style="left:323.21px;top:141.34px;width:1px;height:36.54px;background:#484848"></div><div class="a" style="left:308.54px;top:151.25px;width:15.17px;height:1px;background:#484848"></div><div class="a" style="left:323.21px;top:151.75px;width:1px;height:36.54px;background:#484848"></div><div class="a" style="left:349.84px;top:182.47px;width:2.00px;height:1px;background:#5252d8"></div><div class="a" style="left:351.34px;top:182.97px;width:1px;height:15.72px;background:#5252d8"></div><div class="a" style="left:341.08px;top:192.89px;width:8.91px;height:1px;background:#5252d8"></div><div class="a" style="left:349.49px;top:193.39px;width:1px;height:5.31px;background:#5252d8"></div><div class="a" style="left:358.60px;top:203.29px;width:2.00px;height:1px;background:#5252d8"></div><div class="a" style="left:360.10px;top:203.79px;width:1px;height:5.31px;background:#5252d8"></div><div class="a" style="left:481.24px;top:213.71px;width:2.00px;height:1px;background:#5252d8"></div><div class="a" style="left:482.74px;top:214.21px;width:1px;height:15.72px;background:#5252d8"></div><div class="a" style="left:481.24px;top:213.71px;width:2.00px;height:1px;background:#5252d8"></div><div class="a" style="left:482.74px;top:214.21px;width:1px;height:26.13px;background:#5252d8"></div><div class="a" style="left:542.56px;top:234.53px;width:2.00px;height:1px;background:#5252d8"></div><div class="a" style="left:544.06px;top:235.03px;width:1px;height:15.72px;background:#5252d8"></div><div class="a" style="left:306.04px;top:130.43px;width:17.67px;height:1px;background:#5252d8"></div><div class="a" style="left:323.21px;top:130.93px;width:1px;height:140.64px;background:#5252d8"></div><div class="a" style="left:332.32px;top:276.17px;width:26.43px;height:1px;background:#5252d8"></div><div class="a" style="left:358.25px;top:276.67px;width:1px;height:5.31px;background:#5252d8"></div><div class="a" style="left:308.54px;top:161.66px;width:15.17px;height:1px;background:#484848"></div><div class="a" style="left:323.21px;top:162.16px;width:1px;height:130.23px;background:#484848"></div><div class="a" style="left:308.54px;top:140.84px;width:15.17px;height:1px;background:#484848"></div><div class="a" style="left:323.21px;top:141.34px;width:1px;height:161.46px;background:#484848"></div><div class="a" style="left:308.54px;top:151.25px;width:15.17px;height:1px;background:#484848"></div><div class="a" style="left:323.21px;top:151.75px;width:1px;height:151.05px;background:#484848"></div><div class="a" style="left:308.54px;top:161.66px;width:15.17px;height:1px;background:#484848"></div><div class="a" style="left:323.21px;top:162.16px;width:1px;height:140.64px;background:#484848"></div><div class="a" style="left:367.36px;top:286.57px;width:17.67px;height:1px;background:#5252d8"></div><div class="a" style="left:384.53px;top:287.07px;width:1px;height:26.13px;background:#5252d8"></div><div class="a" style="left:332.32px;top:296.99px;width:52.71px;height:1px;background:#5252d8"></div><div class="a" style="left:384.53px;top:297.49px;width:1px;height:15.72px;background:#5252d8"></div><div class="a" style="left:349.84px;top:307.39px;width:35.19px;height:1px;background:#5252d8"></div><div class="a" style="left:384.53px;top:307.89px;width:1px;height:5.31px;background:#5252d8"></div><div class="a" style="left:332.32px;top:296.99px;width:61.47px;height:1px;background:#5252d8"></div><div class="a" style="left:393.29px;top:297.49px;width:1px;height:26.13px;background:#5252d8"></div><div class="a" style="left:367.36px;top:286.57px;width:26.43px;height:1px;background:#5252d8"></div><div class="a" style="left:393.29px;top:287.07px;width:1px;height:36.54px;background:#5252d8"></div><div class="a" style="left:402.40px;top:328.21px;width:2.00px;height:1px;background:#5252d8"></div><div class="a" style="left:403.90px;top:328.71px;width:1px;height:5.31px;background:#5252d8"></div><div class="a" style="left:402.40px;top:328.21px;width:8.91px;height:1px;background:#5252d8"></div><div class="a" style="left:410.81px;top:328.71px;width:1px;height:15.72px;background:#5252d8"></div><div class="a" style="left:411.16px;top:338.62px;width:2.00px;height:1px;background:#5252d8"></div><div class="a" style="left:412.66px;top:339.12px;width:1px;height:5.31px;background:#5252d8"></div><div class="a" style="left:402.40px;top:328.21px;width:8.91px;height:1px;background:#5252d8"></div><div class="a" style="left:410.81px;top:328.71px;width:1px;height:26.13px;background:#5252d8"></div><div class="a" style="left:411.16px;top:338.62px;width:2.00px;height:1px;background:#5252d8"></div><div class="a" style="left:412.66px;top:339.12px;width:1px;height:15.72px;background:#5252d8"></div><div class="a" style="left:419.92px;top:349.04px;width:26.43px;height:1px;background:#5252d8"></div><div class="a" style="left:445.85px;top:349.54px;width:1px;height:15.72px;background:#5252d8"></div><div class="a" style="left:428.68px;top:359.44px;width:17.67px;height:1px;background:#5252d8"></div><div class="a" style="left:445.85px;top:359.94px;width:1px;height:5.31px;background:#5252d8"></div><div class="a" style="left:454.96px;top:369.86px;width:2.00px;height:1px;background:#5252d8"></div><div class="a" style="left:456.46px;top:370.36px;width:1px;height:5.31px;background:#5252d8"></div><div class="a" style="left:349.84px;top:307.39px;width:2.00px;height:1px;background:#5252d8"></div><div class="a" style="left:351.34px;top:307.89px;width:1px;height:78.18px;background:#5252d8"></div><div class="a" style="left:472.48px;top:390.68px;width:2.00px;height:1px;background:#5252d8"></div><div class="a" style="left:473.98px;top:391.18px;width:1px;height:5.31px;background:#5252d8"></div><div class="a" style="left:463.72px;top:380.26px;width:8.91px;height:1px;background:#5252d8"></div><div class="a" style="left:472.13px;top:380.76px;width:1px;height:15.72px;background:#5252d8"></div><div class="a" style="left:481.24px;top:401.08px;width:35.19px;height:1px;background:#5252d8"></div><div class="a" style="left:515.93px;top:401.58px;width:1px;height:5.31px;background:#5252d8"></div><div class="a" style="left:525.04px;top:411.50px;width:2.00px;height:1px;background:#5252d8"></div><div class="a" style="left:526.54px;top:412.00px;width:1px;height:5.31px;background:#5252d8"></div><div class="a" style="left:463.72px;top:380.26px;width:2.00px;height:1px;background:#5252d8"></div><div class="a" style="left:465.22px;top:380.76px;width:1px;height:57.36px;background:#5252d8"></div><div class="a" style="left:490.00px;top:442.73px;width:17.67px;height:1px;background:#5252d8"></div><div class="a" style="left:507.17px;top:443.23px;width:1px;height:5.31px;background:#5252d8"></div><div class="a" style="left:524.84px;top:422.40px;width:1px;height:32.30px;background:#5252d8"></div><div class="a" style="left:5.90px;top:3.71px;width:4.6px;height:4.6px;background:radial-gradient(#6a6a6a 15%,#1a1a1a 65%);transform:rotate(45deg)"></div><div class="t b" style="left:15.60px;top:0.41px;font-size:6.3px;color:#111">6/1</div><div class="a" style="left:5.90px;top:14.12px;width:4.6px;height:4.6px;background:radial-gradient(#6a6a6a 15%,#1a1a1a 65%);transform:rotate(45deg)"></div><div class="t b" style="left:15.60px;top:10.82px;font-size:6.3px;color:#111">6/1</div><div class="a" style="left:5.90px;top:24.53px;width:4.6px;height:4.6px;background:radial-gradient(#6a6a6a 15%,#1a1a1a 65%);transform:rotate(45deg)"></div><div class="t b" style="left:15.60px;top:21.23px;font-size:6.3px;color:#111">6/1</div><div class="a" style="left:5.90px;top:34.94px;width:4.6px;height:4.6px;background:radial-gradient(#6a6a6a 15%,#1a1a1a 65%);transform:rotate(45deg)"></div><div class="t b" style="left:15.60px;top:31.64px;font-size:6.3px;color:#111">6/1</div><div class="a" style="left:5.90px;top:45.35px;width:4.6px;height:4.6px;background:radial-gradient(#6a6a6a 15%,#1a1a1a 65%);transform:rotate(45deg)"></div><div class="t b" style="left:15.60px;top:42.05px;font-size:6.3px;color:#111">6/1</div><div class="a" style="left:5.90px;top:55.76px;width:4.6px;height:4.6px;background:radial-gradient(#6a6a6a 15%,#1a1a1a 65%);transform:rotate(45deg)"></div><div class="t b" style="left:15.60px;top:52.46px;font-size:6.3px;color:#111">6/1</div><div class="a" style="left:5.90px;top:66.17px;width:4.6px;height:4.6px;background:radial-gradient(#6a6a6a 15%,#1a1a1a 65%);transform:rotate(45deg)"></div><div class="t b" style="left:15.60px;top:62.87px;font-size:6.3px;color:#111">6/1</div><div class="a" style="left:5.90px;top:76.58px;width:4.6px;height:4.6px;background:radial-gradient(#6a6a6a 15%,#1a1a1a 65%);transform:rotate(45deg)"></div><div class="t b" style="left:15.60px;top:73.28px;font-size:6.3px;color:#111">6/1</div><div class="a" style="left:16.96px;top:86.39px;width:289.08px;height:3.3px;background:#262626"></div><svg class="a" style="left:13.66px;top:86.39px" width="6.6" height="6"><path d="M0 0H6.6V2.6L3.3 5.9L0 2.6Z" fill="#262626"/><path d="M2 1.2H4.6L3.3 2.8Z" fill="#777"/></svg><svg class="a" style="left:302.74px;top:86.39px" width="6.6" height="6"><path d="M0 0H6.6V2.6L3.3 5.9L0 2.6Z" fill="#262626"/><path d="M2 1.2H4.6L3.3 2.8Z" fill="#777"/></svg><div class="a" style="left:16.96px;top:97.10px;width:166.44px;height:5.8px;border-radius:2.2px;background:linear-gradient(#3030f0,#5a5aff 30%,#9090ff 48%,#4a4aff 68%,#1a1ae0);border:0.7px solid #0808b8"></div><div class="t b" style="left:187.20px;top:94.20px;font-size:6.3px;color:#111;transform:scaleX(.965);transform-origin:0 50%">Builder</div><div class="a" style="left:16.96px;top:107.51px;width:227.76px;height:5.8px;border-radius:2.2px;background:linear-gradient(#3030f0,#5a5aff 30%,#9090ff 48%,#4a4aff 68%,#1a1ae0);border:0.7px solid #0808b8"></div><div class="t b" style="left:248.52px;top:104.61px;font-size:6.3px;color:#111;transform:scaleX(.965);transform-origin:0 50%">Builder</div><div class="a" style="left:200.92px;top:117.92px;width:8.76px;height:5.8px;border-radius:2.2px;background:linear-gradient(#3030f0,#5a5aff 30%,#9090ff 48%,#4a4aff 68%,#1a1ae0);border:0.7px solid #0808b8"></div><div class="t b" style="left:213.48px;top:115.02px;font-size:6.3px;color:#111;transform:scaleX(.965);transform-origin:0 50%">Builder</div><div class="a" style="left:262.24px;top:128.33px;width:43.80px;height:5.8px;border-radius:2.2px;background:linear-gradient(#3030f0,#5a5aff 30%,#9090ff 48%,#4a4aff 68%,#1a1ae0);border:0.7px solid #0808b8"></div><div class="t b" style="left:309.84px;top:125.43px;font-size:6.3px;color:#111;transform:scaleX(.965);transform-origin:0 50%">Builder</div><div class="a" style="left:303.74px;top:139.03px;width:4.6px;height:4.6px;background:radial-gradient(#6a6a6a 15%,#1a1a1a 65%);transform:rotate(45deg)"></div><div class="t b" style="left:313.44px;top:135.74px;font-size:6.3px;color:#111">7/4</div><div class="a" style="left:303.74px;top:149.45px;width:4.6px;height:4.6px;background:radial-gradient(#6a6a6a 15%,#1a1a1a 65%);transform:rotate(45deg)"></div><div class="t b" style="left:313.44px;top:146.15px;font-size:6.3px;color:#111">7/4</div><div class="a" style="left:303.74px;top:159.85px;width:4.6px;height:4.6px;background:radial-gradient(#6a6a6a 15%,#1a1a1a 65%);transform:rotate(45deg)"></div><div class="t b" style="left:313.44px;top:156.56px;font-size:6.3px;color:#111">7/4</div><div class="a" style="left:323.56px;top:169.67px;width:280.32px;height:3.3px;background:#262626"></div><svg class="a" style="left:320.26px;top:169.67px" width="6.6" height="6"><path d="M0 0H6.6V2.6L3.3 5.9L0 2.6Z" fill="#262626"/><path d="M2 1.2H4.6L3.3 2.8Z" fill="#777"/></svg><svg class="a" style="left:600.58px;top:169.67px" width="6.6" height="6"><path d="M0 0H6.6V2.6L3.3 5.9L0 2.6Z" fill="#262626"/><path d="M2 1.2H4.6L3.3 2.8Z" fill="#777"/></svg><div class="a" style="left:323.56px;top:180.38px;width:26.28px;height:5.8px;border-radius:2.2px;background:linear-gradient(#3030f0,#5a5aff 30%,#9090ff 48%,#4a4aff 68%,#1a1ae0);border:0.7px solid #0808b8"></div><div class="t b" style="left:353.64px;top:177.47px;font-size:6.3px;color:#111;transform:scaleX(.965);transform-origin:0 50%">Builder</div><div class="a" style="left:323.56px;top:190.79px;width:17.52px;height:5.8px;border-radius:2.2px;background:linear-gradient(#3030f0,#5a5aff 30%,#9090ff 48%,#4a4aff 68%,#1a1ae0);border:0.7px solid #0808b8"></div><div class="t b" style="left:344.88px;top:187.89px;font-size:6.3px;color:#111;transform:scaleX(.965);transform-origin:0 50%">Builder</div><div class="a" style="left:349.84px;top:201.19px;width:8.76px;height:5.8px;border-radius:2.2px;background:linear-gradient(#3030f0,#5a5aff 30%,#9090ff 48%,#4a4aff 68%,#1a1ae0);border:0.7px solid #0808b8"></div><div class="t b" style="left:362.40px;top:198.29px;font-size:6.3px;color:#111;transform:scaleX(.965);transform-origin:0 50%">Builder</div><div class="a" style="left:358.60px;top:211.61px;width:122.64px;height:5.8px;border-radius:2.2px;background:linear-gradient(#3030f0,#5a5aff 30%,#9090ff 48%,#4a4aff 68%,#1a1ae0);border:0.7px solid #0808b8"></div><div class="t b" style="left:485.04px;top:208.71px;font-size:6.3px;color:#111;transform:scaleX(.965);transform-origin:0 50%">Builder</div><div class="a" style="left:481.24px;top:221.72px;width:61.32px;height:3.3px;background:#262626"></div><svg class="a" style="left:477.94px;top:221.72px" width="6.6" height="6"><path d="M0 0H6.6V2.6L3.3 5.9L0 2.6Z" fill="#262626"/><path d="M2 1.2H4.6L3.3 2.8Z" fill="#777"/></svg><svg class="a" style="left:539.26px;top:221.72px" width="6.6" height="6"><path d="M0 0H6.6V2.6L3.3 5.9L0 2.6Z" fill="#262626"/><path d="M2 1.2H4.6L3.3 2.8Z" fill="#777"/></svg><div class="a" style="left:481.24px;top:232.43px;width:61.32px;height:5.8px;border-radius:2.2px;background:linear-gradient(#3030f0,#5a5aff 30%,#9090ff 48%,#4a4aff 68%,#1a1ae0);border:0.7px solid #0808b8"></div><div class="t b" style="left:546.36px;top:229.53px;font-size:6.3px;color:#111;transform:scaleX(.965);transform-origin:0 50%">Builder</div><div class="a" style="left:481.24px;top:242.84px;width:61.32px;height:5.8px;border-radius:2.2px;background:linear-gradient(#3030f0,#5a5aff 30%,#9090ff 48%,#4a4aff 68%,#1a1ae0);border:0.7px solid #0808b8"></div><div class="t b" style="left:546.36px;top:239.94px;font-size:6.3px;color:#111;transform:scaleX(.965);transform-origin:0 50%">Builder</div><div class="a" style="left:542.56px;top:253.25px;width:61.32px;height:5.8px;border-radius:2.2px;background:linear-gradient(#3030f0,#5a5aff 30%,#9090ff 48%,#4a4aff 68%,#1a1ae0);border:0.7px solid #0808b8"></div><div class="t b" style="left:607.68px;top:250.34px;font-size:6.3px;color:#111;transform:scaleX(.965);transform-origin:0 50%">Builder</div><div class="a" style="left:323.56px;top:263.36px;width:201.48px;height:3.3px;background:#262626"></div><svg class="a" style="left:320.26px;top:263.36px" width="6.6" height="6"><path d="M0 0H6.6V2.6L3.3 5.9L0 2.6Z" fill="#262626"/><path d="M2 1.2H4.6L3.3 2.8Z" fill="#777"/></svg><svg class="a" style="left:521.74px;top:263.36px" width="6.6" height="6"><path d="M0 0H6.6V2.6L3.3 5.9L0 2.6Z" fill="#262626"/><path d="M2 1.2H4.6L3.3 2.8Z" fill="#777"/></svg><div class="a" style="left:323.56px;top:274.06px;width:8.76px;height:5.8px;border-radius:2.2px;background:linear-gradient(#3030f0,#5a5aff 30%,#9090ff 48%,#4a4aff 68%,#1a1ae0);border:0.7px solid #0808b8"></div><div class="t b" style="left:336.12px;top:271.17px;font-size:6.3px;color:#111;transform:scaleX(.965);transform-origin:0 50%">Builder</div><div class="a" style="left:358.60px;top:284.47px;width:8.76px;height:5.8px;border-radius:2.2px;background:linear-gradient(#3030f0,#5a5aff 30%,#9090ff 48%,#4a4aff 68%,#1a1ae0);border:0.7px solid #0808b8"></div><div class="t b" style="left:371.16px;top:281.57px;font-size:6.3px;color:#111;transform:scaleX(.965);transform-origin:0 50%">Civil Engineer</div><div class="a" style="left:323.56px;top:294.88px;width:8.76px;height:5.8px;border-radius:2.2px;background:linear-gradient(#3030f0,#5a5aff 30%,#9090ff 48%,#4a4aff 68%,#1a1ae0);border:0.7px solid #0808b8"></div><div class="t b" style="left:336.12px;top:291.99px;font-size:6.3px;color:#111;transform:scaleX(.965);transform-origin:0 50%">Builder</div><div class="a" style="left:323.56px;top:305.29px;width:26.28px;height:5.8px;border-radius:2.2px;background:linear-gradient(#3030f0,#5a5aff 30%,#9090ff 48%,#4a4aff 68%,#1a1ae0);border:0.7px solid #0808b8"></div><div class="t b" style="left:353.64px;top:302.39px;font-size:6.3px;color:#111;transform:scaleX(.965);transform-origin:0 50%">Builder</div><div class="a" style="left:384.88px;top:315.70px;width:8.76px;height:5.8px;border-radius:2.2px;background:linear-gradient(#3030f0,#5a5aff 30%,#9090ff 48%,#4a4aff 68%,#1a1ae0);border:0.7px solid #0808b8"></div><div class="t b" style="left:397.44px;top:312.81px;font-size:6.3px;color:#111;transform:scaleX(.965);transform-origin:0 50%">Builder</div><div class="a" style="left:393.64px;top:326.11px;width:8.76px;height:5.8px;border-radius:2.2px;background:linear-gradient(#3030f0,#5a5aff 30%,#9090ff 48%,#4a4aff 68%,#1a1ae0);border:0.7px solid #0808b8"></div><div class="t b" style="left:406.20px;top:323.21px;font-size:6.3px;color:#111;transform:scaleX(.965);transform-origin:0 50%">Builder</div><div class="a" style="left:402.40px;top:336.52px;width:8.76px;height:5.8px;border-radius:2.2px;background:linear-gradient(#3030f0,#5a5aff 30%,#9090ff 48%,#4a4aff 68%,#1a1ae0);border:0.7px solid #0808b8"></div><div class="t b" style="left:414.96px;top:333.62px;font-size:6.3px;color:#111;transform:scaleX(.965);transform-origin:0 50%">Builder</div><div class="a" style="left:411.16px;top:346.94px;width:8.76px;height:5.8px;border-radius:2.2px;background:linear-gradient(#3030f0,#5a5aff 30%,#9090ff 48%,#4a4aff 68%,#1a1ae0);border:0.7px solid #0808b8"></div><div class="t b" style="left:423.72px;top:344.04px;font-size:6.3px;color:#111;transform:scaleX(.965);transform-origin:0 50%">Excavation Subcontractor</div><div class="a" style="left:411.16px;top:357.34px;width:17.52px;height:5.8px;border-radius:2.2px;background:linear-gradient(#3030f0,#5a5aff 30%,#9090ff 48%,#4a4aff 68%,#1a1ae0);border:0.7px solid #0808b8"></div><div class="t b" style="left:432.48px;top:354.44px;font-size:6.3px;color:#111;transform:scaleX(.965);transform-origin:0 50%">Excavation Subcontractor</div><div class="a" style="left:446.20px;top:367.75px;width:8.76px;height:5.8px;border-radius:2.2px;background:linear-gradient(#3030f0,#5a5aff 30%,#9090ff 48%,#4a4aff 68%,#1a1ae0);border:0.7px solid #0808b8"></div><div class="t b" style="left:458.76px;top:364.86px;font-size:6.3px;color:#111;transform:scaleX(.965);transform-origin:0 50%">Sediment Control Inspector</div><div class="a" style="left:454.96px;top:378.16px;width:8.76px;height:5.8px;border-radius:2.2px;background:linear-gradient(#3030f0,#5a5aff 30%,#9090ff 48%,#4a4aff 68%,#1a1ae0);border:0.7px solid #0808b8"></div><div class="t b" style="left:467.52px;top:375.26px;font-size:6.3px;color:#111;transform:scaleX(.965);transform-origin:0 50%">Sediment Control Inspector</div><div class="a" style="left:349.84px;top:388.57px;width:122.64px;height:5.8px;border-radius:2.2px;background:linear-gradient(#3030f0,#5a5aff 30%,#9090ff 48%,#4a4aff 68%,#1a1ae0);border:0.7px solid #0808b8"></div><div class="t b" style="left:476.28px;top:385.68px;font-size:6.3px;color:#111;transform:scaleX(.965);transform-origin:0 50%">Department of Permits &amp; Inspections</div><div class="a" style="left:472.48px;top:398.98px;width:8.76px;height:5.8px;border-radius:2.2px;background:linear-gradient(#3030f0,#5a5aff 30%,#9090ff 48%,#4a4aff 68%,#1a1ae0);border:0.7px solid #0808b8"></div><div class="t b" style="left:485.04px;top:396.08px;font-size:6.3px;color:#111;transform:scaleX(.965);transform-origin:0 50%">Department of Permits &amp; Inspections</div><div class="a" style="left:516.28px;top:409.39px;width:8.76px;height:5.8px;border-radius:2.2px;background:linear-gradient(#3030f0,#5a5aff 30%,#9090ff 48%,#4a4aff 68%,#1a1ae0);border:0.7px solid #0808b8"></div><div class="t b" style="left:528.84px;top:406.50px;font-size:6.3px;color:#111;transform:scaleX(.965);transform-origin:0 50%">Builder</div><div class="a" style="left:522.74px;top:420.10px;width:4.6px;height:4.6px;background:radial-gradient(#6a6a6a 15%,#1a1a1a 65%);transform:rotate(45deg)"></div><div class="t b" style="left:532.44px;top:416.80px;font-size:6.3px;color:#111">7/29</div><div class="a" style="left:463.72px;top:429.92px;width:78.84px;height:3.3px;background:#262626"></div><svg class="a" style="left:460.42px;top:429.92px" width="6.6" height="6"><path d="M0 0H6.6V2.6L3.3 5.9L0 2.6Z" fill="#262626"/><path d="M2 1.2H4.6L3.3 2.8Z" fill="#777"/></svg><svg class="a" style="left:539.26px;top:429.92px" width="6.6" height="6"><path d="M0 0H6.6V2.6L3.3 5.9L0 2.6Z" fill="#262626"/><path d="M2 1.2H4.6L3.3 2.8Z" fill="#777"/></svg><div class="a" style="left:463.72px;top:440.62px;width:26.28px;height:5.8px;border-radius:2.2px;background:linear-gradient(#3030f0,#5a5aff 30%,#9090ff 48%,#4a4aff 68%,#1a1ae0);border:0.7px solid #0808b8"></div><div class="t b" style="left:493.80px;top:437.73px;font-size:6.3px;color:#111;transform:scaleX(.965);transform-origin:0 50%">Excavation Subcontractor</div><div class="a" style="left:507.52px;top:451.03px;width:8.76px;height:5.8px;border-radius:2.2px;background:linear-gradient(#3030f0,#5a5aff 30%,#9090ff 48%,#4a4aff 68%,#1a1ae0);border:0.7px solid #0808b8"></div><div class="t b" style="left:520.08px;top:448.13px;font-size:6.3px;color:#111;transform:scaleX(.965);transform-origin:0 50%">Excavation Subcontractor</div><svg class="a" style="left:2.30px;top:34.64px" width="3.6" height="5.2"><path d="M0 0L3.6 2.6L0 5.2Z" fill="#1a1a1a"/></svg><svg class="a" style="left:2.30px;top:45.05px" width="3.6" height="5.2"><path d="M0 0L3.6 2.6L0 5.2Z" fill="#1a1a1a"/></svg><svg class="a" style="left:2.30px;top:55.46px" width="3.6" height="5.2"><path d="M0 0L3.6 2.6L0 5.2Z" fill="#1a1a1a"/></svg><svg class="a" style="left:14.61px;top:93.90px" width="5" height="3.2"><path d="M0 0H5L2.5 3.2Z" fill="#1a1a1a"/></svg><svg class="a" style="left:14.61px;top:104.31px" width="5" height="3.2"><path d="M0 0H5L2.5 3.2Z" fill="#1a1a1a"/></svg><svg class="a" style="left:198.57px;top:114.72px" width="5" height="3.2"><path d="M0 0H5L2.5 3.2Z" fill="#1a1a1a"/></svg><svg class="a" style="left:198.57px;top:114.72px" width="5" height="3.2"><path d="M0 0H5L2.5 3.2Z" fill="#2222cc"/></svg><svg class="a" style="left:259.89px;top:125.13px" width="5" height="3.2"><path d="M0 0H5L2.5 3.2Z" fill="#2222cc"/></svg><svg class="a" style="left:259.89px;top:125.13px" width="5" height="3.2"><path d="M0 0H5L2.5 3.2Z" fill="#2222cc"/></svg><svg class="a" style="left:259.89px;top:125.13px" width="5" height="3.2"><path d="M0 0H5L2.5 3.2Z" fill="#2222cc"/></svg><svg class="a" style="left:305.54px;top:135.54px" width="5" height="3.2"><path d="M0 0H5L2.5 3.2Z" fill="#2222cc"/></svg><svg class="a" style="left:305.54px;top:145.95px" width="5" height="3.2"><path d="M0 0H5L2.5 3.2Z" fill="#2222cc"/></svg><svg class="a" style="left:305.54px;top:156.36px" width="5" height="3.2"><path d="M0 0H5L2.5 3.2Z" fill="#2222cc"/></svg><svg class="a" style="left:321.21px;top:177.18px" width="5" height="3.2"><path d="M0 0H5L2.5 3.2Z" fill="#1a1a1a"/></svg><svg class="a" style="left:321.21px;top:187.59px" width="5" height="3.2"><path d="M0 0H5L2.5 3.2Z" fill="#1a1a1a"/></svg><svg class="a" style="left:349.34px;top:198.00px" width="5" height="3.2"><path d="M0 0H5L2.5 3.2Z" fill="#2222cc"/></svg><svg class="a" style="left:347.49px;top:198.00px" width="5" height="3.2"><path d="M0 0H5L2.5 3.2Z" fill="#2222cc"/></svg><svg class="a" style="left:358.10px;top:208.41px" width="5" height="3.2"><path d="M0 0H5L2.5 3.2Z" fill="#2222cc"/></svg><svg class="a" style="left:480.74px;top:229.23px" width="5" height="3.2"><path d="M0 0H5L2.5 3.2Z" fill="#2222cc"/></svg><svg class="a" style="left:480.74px;top:239.64px" width="5" height="3.2"><path d="M0 0H5L2.5 3.2Z" fill="#2222cc"/></svg><svg class="a" style="left:542.06px;top:250.05px" width="5" height="3.2"><path d="M0 0H5L2.5 3.2Z" fill="#2222cc"/></svg><svg class="a" style="left:321.21px;top:270.87px" width="5" height="3.2"><path d="M0 0H5L2.5 3.2Z" fill="#2222cc"/></svg><svg class="a" style="left:356.25px;top:281.27px" width="5" height="3.2"><path d="M0 0H5L2.5 3.2Z" fill="#2222cc"/></svg><svg class="a" style="left:321.21px;top:291.69px" width="5" height="3.2"><path d="M0 0H5L2.5 3.2Z" fill="#1a1a1a"/></svg><svg class="a" style="left:321.21px;top:302.09px" width="5" height="3.2"><path d="M0 0H5L2.5 3.2Z" fill="#1a1a1a"/></svg><svg class="a" style="left:321.21px;top:302.09px" width="5" height="3.2"><path d="M0 0H5L2.5 3.2Z" fill="#1a1a1a"/></svg><svg class="a" style="left:321.21px;top:302.09px" width="5" height="3.2"><path d="M0 0H5L2.5 3.2Z" fill="#1a1a1a"/></svg><svg class="a" style="left:382.53px;top:312.50px" width="5" height="3.2"><path d="M0 0H5L2.5 3.2Z" fill="#2222cc"/></svg><svg class="a" style="left:382.53px;top:312.50px" width="5" height="3.2"><path d="M0 0H5L2.5 3.2Z" fill="#2222cc"/></svg><svg class="a" style="left:382.53px;top:312.50px" width="5" height="3.2"><path d="M0 0H5L2.5 3.2Z" fill="#2222cc"/></svg><svg class="a" style="left:391.29px;top:322.91px" width="5" height="3.2"><path d="M0 0H5L2.5 3.2Z" fill="#2222cc"/></svg><svg class="a" style="left:391.29px;top:322.91px" width="5" height="3.2"><path d="M0 0H5L2.5 3.2Z" fill="#2222cc"/></svg><svg class="a" style="left:401.90px;top:333.32px" width="5" height="3.2"><path d="M0 0H5L2.5 3.2Z" fill="#2222cc"/></svg><svg class="a" style="left:408.81px;top:343.74px" width="5" height="3.2"><path d="M0 0H5L2.5 3.2Z" fill="#2222cc"/></svg><svg class="a" style="left:410.66px;top:343.74px" width="5" height="3.2"><path d="M0 0H5L2.5 3.2Z" fill="#2222cc"/></svg><svg class="a" style="left:408.81px;top:354.14px" width="5" height="3.2"><path d="M0 0H5L2.5 3.2Z" fill="#2222cc"/></svg><svg class="a" style="left:410.66px;top:354.14px" width="5" height="3.2"><path d="M0 0H5L2.5 3.2Z" fill="#2222cc"/></svg><svg class="a" style="left:443.85px;top:364.56px" width="5" height="3.2"><path d="M0 0H5L2.5 3.2Z" fill="#2222cc"/></svg><svg class="a" style="left:443.85px;top:364.56px" width="5" height="3.2"><path d="M0 0H5L2.5 3.2Z" fill="#2222cc"/></svg><svg class="a" style="left:454.46px;top:374.96px" width="5" height="3.2"><path d="M0 0H5L2.5 3.2Z" fill="#2222cc"/></svg><svg class="a" style="left:349.34px;top:385.38px" width="5" height="3.2"><path d="M0 0H5L2.5 3.2Z" fill="#2222cc"/></svg><svg class="a" style="left:471.98px;top:395.78px" width="5" height="3.2"><path d="M0 0H5L2.5 3.2Z" fill="#2222cc"/></svg><svg class="a" style="left:470.13px;top:395.78px" width="5" height="3.2"><path d="M0 0H5L2.5 3.2Z" fill="#2222cc"/></svg><svg class="a" style="left:513.93px;top:406.19px" width="5" height="3.2"><path d="M0 0H5L2.5 3.2Z" fill="#2222cc"/></svg><svg class="a" style="left:524.54px;top:416.60px" width="5" height="3.2"><path d="M0 0H5L2.5 3.2Z" fill="#2222cc"/></svg><svg class="a" style="left:463.22px;top:437.43px" width="5" height="3.2"><path d="M0 0H5L2.5 3.2Z" fill="#2222cc"/></svg><svg class="a" style="left:505.17px;top:447.83px" width="5" height="3.2"><path d="M0 0H5L2.5 3.2Z" fill="#2222cc"/></svg>
</div>
<div class="a" style="left:358.0px;top:66.0px;width:552.6px;height:15.299999999999997px;background:linear-gradient(#f4f4f4,#ebebeb);overflow:hidden">
<div class="a" style="left:0;top:7.30px;width:600px;height:0.8px;background:#d0d0d0"></div><div class="a" style="left:0;top:14.30px;width:600px;height:1.2px;background:#c4c4c4"></div><div class="a" style="left:-53.72px;top:0;width:1px;height:7.80px;background:#c4c4c4"></div><div class="t" style="left:-51.52px;top:-0.9px;font-size:6.3px;color:#1a1a1a">May 25, '08</div><div class="a" style="left:7.60px;top:0;width:1px;height:7.80px;background:#c4c4c4"></div><div class="t" style="left:9.80px;top:-0.9px;font-size:6.3px;color:#1a1a1a">Jun 1, '08</div><div class="a" style="left:68.92px;top:0;width:1px;height:7.80px;background:#c4c4c4"></div><div class="t" style="left:71.12px;top:-0.9px;font-size:6.3px;color:#1a1a1a">Jun 8, '08</div><div class="a" style="left:130.24px;top:0;width:1px;height:7.80px;background:#c4c4c4"></div><div class="t" style="left:132.44px;top:-0.9px;font-size:6.3px;color:#1a1a1a">Jun 15, '08</div><div class="a" style="left:191.56px;top:0;width:1px;height:7.80px;background:#c4c4c4"></div><div class="t" style="left:193.76px;top:-0.9px;font-size:6.3px;color:#1a1a1a">Jun 22, '08</div><div class="a" style="left:252.88px;top:0;width:1px;height:7.80px;background:#c4c4c4"></div><div class="t" style="left:255.08px;top:-0.9px;font-size:6.3px;color:#1a1a1a">Jun 29, '08</div><div class="a" style="left:314.20px;top:0;width:1px;height:7.80px;background:#c4c4c4"></div><div class="t" style="left:316.40px;top:-0.9px;font-size:6.3px;color:#1a1a1a">Jul 6, '08</div><div class="a" style="left:375.52px;top:0;width:1px;height:7.80px;background:#c4c4c4"></div><div class="t" style="left:377.72px;top:-0.9px;font-size:6.3px;color:#1a1a1a">Jul 13, '08</div><div class="a" style="left:436.84px;top:0;width:1px;height:7.80px;background:#c4c4c4"></div><div class="t" style="left:439.04px;top:-0.9px;font-size:6.3px;color:#1a1a1a">Jul 20, '08</div><div class="a" style="left:498.16px;top:0;width:1px;height:7.80px;background:#c4c4c4"></div><div class="t" style="left:500.36px;top:-0.9px;font-size:6.3px;color:#1a1a1a">Jul 27, '08</div><div class="a" style="left:559.48px;top:0;width:1px;height:7.80px;background:#c4c4c4"></div><div class="t" style="left:561.68px;top:-0.9px;font-size:6.3px;color:#1a1a1a">Aug 3, '08</div><div class="a" style="left:-1.06px;top:7.80px;width:0.8px;height:7.50px;background:#c8c8c8"></div><div class="t c" style="left:-0.56px;top:7.20px;width:8.76px;font-size:6.3px;color:#1a1a1a">S</div><div class="a" style="left:7.70px;top:7.80px;width:0.8px;height:7.50px;background:#c8c8c8"></div><div class="t c" style="left:8.20px;top:7.20px;width:8.76px;font-size:6.3px;color:#1a1a1a">S</div><div class="a" style="left:16.46px;top:7.80px;width:0.8px;height:7.50px;background:#c8c8c8"></div><div class="t c" style="left:16.96px;top:7.20px;width:8.76px;font-size:6.3px;color:#1a1a1a">M</div><div class="a" style="left:25.22px;top:7.80px;width:0.8px;height:7.50px;background:#c8c8c8"></div><div class="t c" style="left:25.72px;top:7.20px;width:8.76px;font-size:6.3px;color:#1a1a1a">T</div><div class="a" style="left:33.98px;top:7.80px;width:0.8px;height:7.50px;background:#c8c8c8"></div><div class="t c" style="left:34.48px;top:7.20px;width:8.76px;font-size:6.3px;color:#1a1a1a">W</div><div class="a" style="left:42.74px;top:7.80px;width:0.8px;height:7.50px;background:#c8c8c8"></div><div class="t c" style="left:43.24px;top:7.20px;width:8.76px;font-size:6.3px;color:#1a1a1a">T</div><div class="a" style="left:51.50px;top:7.80px;width:0.8px;height:7.50px;background:#c8c8c8"></div><div class="t c" style="left:52.00px;top:7.20px;width:8.76px;font-size:6.3px;color:#1a1a1a">F</div><div class="a" style="left:60.26px;top:7.80px;width:0.8px;height:7.50px;background:#c8c8c8"></div><div class="t c" style="left:60.76px;top:7.20px;width:8.76px;font-size:6.3px;color:#1a1a1a">S</div><div class="a" style="left:69.02px;top:7.80px;width:0.8px;height:7.50px;background:#c8c8c8"></div><div class="t c" style="left:69.52px;top:7.20px;width:8.76px;font-size:6.3px;color:#1a1a1a">S</div><div class="a" style="left:77.78px;top:7.80px;width:0.8px;height:7.50px;background:#c8c8c8"></div><div class="t c" style="left:78.28px;top:7.20px;width:8.76px;font-size:6.3px;color:#1a1a1a">M</div><div class="a" style="left:86.54px;top:7.80px;width:0.8px;height:7.50px;background:#c8c8c8"></div><div class="t c" style="left:87.04px;top:7.20px;width:8.76px;font-size:6.3px;color:#1a1a1a">T</div><div class="a" style="left:95.30px;top:7.80px;width:0.8px;height:7.50px;background:#c8c8c8"></div><div class="t c" style="left:95.80px;top:7.20px;width:8.76px;font-size:6.3px;color:#1a1a1a">W</div><div class="a" style="left:104.06px;top:7.80px;width:0.8px;height:7.50px;background:#c8c8c8"></div><div class="t c" style="left:104.56px;top:7.20px;width:8.76px;font-size:6.3px;color:#1a1a1a">T</div><div class="a" style="left:112.82px;top:7.80px;width:0.8px;height:7.50px;background:#c8c8c8"></div><div class="t c" style="left:113.32px;top:7.20px;width:8.76px;font-size:6.3px;color:#1a1a1a">F</div><div class="a" style="left:121.58px;top:7.80px;width:0.8px;height:7.50px;background:#c8c8c8"></div><div class="t c" style="left:122.08px;top:7.20px;width:8.76px;font-size:6.3px;color:#1a1a1a">S</div><div class="a" style="left:130.34px;top:7.80px;width:0.8px;height:7.50px;background:#c8c8c8"></div><div class="t c" style="left:130.84px;top:7.20px;width:8.76px;font-size:6.3px;color:#1a1a1a">S</div><div class="a" style="left:139.10px;top:7.80px;width:0.8px;height:7.50px;background:#c8c8c8"></div><div class="t c" style="left:139.60px;top:7.20px;width:8.76px;font-size:6.3px;color:#1a1a1a">M</div><div class="a" style="left:147.86px;top:7.80px;width:0.8px;height:7.50px;background:#c8c8c8"></div><div class="t c" style="left:148.36px;top:7.20px;width:8.76px;font-size:6.3px;color:#1a1a1a">T</div><div class="a" style="left:156.62px;top:7.80px;width:0.8px;height:7.50px;background:#c8c8c8"></div><div class="t c" style="left:157.12px;top:7.20px;width:8.76px;font-size:6.3px;color:#1a1a1a">W</div><div class="a" style="left:165.38px;top:7.80px;width:0.8px;height:7.50px;background:#c8c8c8"></div><div class="t c" style="left:165.88px;top:7.20px;width:8.76px;font-size:6.3px;color:#1a1a1a">T</div><div class="a" style="left:174.14px;top:7.80px;width:0.8px;height:7.50px;background:#c8c8c8"></div><div class="t c" style="left:174.64px;top:7.20px;width:8.76px;font-size:6.3px;color:#1a1a1a">F</div><div class="a" style="left:182.90px;top:7.80px;width:0.8px;height:7.50px;background:#c8c8c8"></div><div class="t c" style="left:183.40px;top:7.20px;width:8.76px;font-size:6.3px;color:#1a1a1a">S</div><div class="a" style="left:191.66px;top:7.80px;width:0.8px;height:7.50px;background:#c8c8c8"></div><div class="t c" style="left:192.16px;top:7.20px;width:8.76px;font-size:6.3px;color:#1a1a1a">S</div><div class="a" style="left:200.42px;top:7.80px;width:0.8px;height:7.50px;background:#c8c8c8"></div><div class="t c" style="left:200.92px;top:7.20px;width:8.76px;font-size:6.3px;color:#1a1a1a">M</div><div class="a" style="left:209.18px;top:7.80px;width:0.8px;height:7.50px;background:#c8c8c8"></div><div class="t c" style="left:209.68px;top:7.20px;width:8.76px;font-size:6.3px;color:#1a1a1a">T</div><div class="a" style="left:217.94px;top:7.80px;width:0.8px;height:7.50px;background:#c8c8c8"></div><div class="t c" style="left:218.44px;top:7.20px;width:8.76px;font-size:6.3px;color:#1a1a1a">W</div><div class="a" style="left:226.70px;top:7.80px;width:0.8px;height:7.50px;background:#c8c8c8"></div><div class="t c" style="left:227.20px;top:7.20px;width:8.76px;font-size:6.3px;color:#1a1a1a">T</div><div class="a" style="left:235.46px;top:7.80px;width:0.8px;height:7.50px;background:#c8c8c8"></div><div class="t c" style="left:235.96px;top:7.20px;width:8.76px;font-size:6.3px;color:#1a1a1a">F</div><div class="a" style="left:244.22px;top:7.80px;width:0.8px;height:7.50px;background:#c8c8c8"></div><div class="t c" style="left:244.72px;top:7.20px;width:8.76px;font-size:6.3px;color:#1a1a1a">S</div><div class="a" style="left:252.98px;top:7.80px;width:0.8px;height:7.50px;background:#c8c8c8"></div><div class="t c" style="left:253.48px;top:7.20px;width:8.76px;font-size:6.3px;color:#1a1a1a">S</div><div class="a" style="left:261.74px;top:7.80px;width:0.8px;height:7.50px;background:#c8c8c8"></div><div class="t c" style="left:262.24px;top:7.20px;width:8.76px;font-size:6.3px;color:#1a1a1a">M</div><div class="a" style="left:270.50px;top:7.80px;width:0.8px;height:7.50px;background:#c8c8c8"></div><div class="t c" style="left:271.00px;top:7.20px;width:8.76px;font-size:6.3px;color:#1a1a1a">T</div><div class="a" style="left:279.26px;top:7.80px;width:0.8px;height:7.50px;background:#c8c8c8"></div><div class="t c" style="left:279.76px;top:7.20px;width:8.76px;font-size:6.3px;color:#1a1a1a">W</div><div class="a" style="left:288.02px;top:7.80px;width:0.8px;height:7.50px;background:#c8c8c8"></div><div class="t c" style="left:288.52px;top:7.20px;width:8.76px;font-size:6.3px;color:#1a1a1a">T</div><div class="a" style="left:296.78px;top:7.80px;width:0.8px;height:7.50px;background:#c8c8c8"></div><div class="t c" style="left:297.28px;top:7.20px;width:8.76px;font-size:6.3px;color:#1a1a1a">F</div><div class="a" style="left:305.54px;top:7.80px;width:0.8px;height:7.50px;background:#c8c8c8"></div><div class="t c" style="left:306.04px;top:7.20px;width:8.76px;font-size:6.3px;color:#1a1a1a">S</div><div class="a" style="left:314.30px;top:7.80px;width:0.8px;height:7.50px;background:#c8c8c8"></div><div class="t c" style="left:314.80px;top:7.20px;width:8.76px;font-size:6.3px;color:#1a1a1a">S</div><div class="a" style="left:323.06px;top:7.80px;width:0.8px;height:7.50px;background:#c8c8c8"></div><div class="t c" style="left:323.56px;top:7.20px;width:8.76px;font-size:6.3px;color:#1a1a1a">M</div><div class="a" style="left:331.82px;top:7.80px;width:0.8px;height:7.50px;background:#c8c8c8"></div><div class="t c" style="left:332.32px;top:7.20px;width:8.76px;font-size:6.3px;color:#1a1a1a">T</div><div class="a" style="left:340.58px;top:7.80px;width:0.8px;height:7.50px;background:#c8c8c8"></div><div class="t c" style="left:341.08px;top:7.20px;width:8.76px;font-size:6.3px;color:#1a1a1a">W</div><div class="a" style="left:349.34px;top:7.80px;width:0.8px;height:7.50px;background:#c8c8c8"></div><div class="t c" style="left:349.84px;top:7.20px;width:8.76px;font-size:6.3px;color:#1a1a1a">T</div><div class="a" style="left:358.10px;top:7.80px;width:0.8px;height:7.50px;background:#c8c8c8"></div><div class="t c" style="left:358.60px;top:7.20px;width:8.76px;font-size:6.3px;color:#1a1a1a">F</div><div class="a" style="left:366.86px;top:7.80px;width:0.8px;height:7.50px;background:#c8c8c8"></div><div class="t c" style="left:367.36px;top:7.20px;width:8.76px;font-size:6.3px;color:#1a1a1a">S</div><div class="a" style="left:375.62px;top:7.80px;width:0.8px;height:7.50px;background:#c8c8c8"></div><div class="t c" style="left:376.12px;top:7.20px;width:8.76px;font-size:6.3px;color:#1a1a1a">S</div><div class="a" style="left:384.38px;top:7.80px;width:0.8px;height:7.50px;background:#c8c8c8"></div><div class="t c" style="left:384.88px;top:7.20px;width:8.76px;font-size:6.3px;color:#1a1a1a">M</div><div class="a" style="left:393.14px;top:7.80px;width:0.8px;height:7.50px;background:#c8c8c8"></div><div class="t c" style="left:393.64px;top:7.20px;width:8.76px;font-size:6.3px;color:#1a1a1a">T</div><div class="a" style="left:401.90px;top:7.80px;width:0.8px;height:7.50px;background:#c8c8c8"></div><div class="t c" style="left:402.40px;top:7.20px;width:8.76px;font-size:6.3px;color:#1a1a1a">W</div><div class="a" style="left:410.66px;top:7.80px;width:0.8px;height:7.50px;background:#c8c8c8"></div><div class="t c" style="left:411.16px;top:7.20px;width:8.76px;font-size:6.3px;color:#1a1a1a">T</div><div class="a" style="left:419.42px;top:7.80px;width:0.8px;height:7.50px;background:#c8c8c8"></div><div class="t c" style="left:419.92px;top:7.20px;width:8.76px;font-size:6.3px;color:#1a1a1a">F</div><div class="a" style="left:428.18px;top:7.80px;width:0.8px;height:7.50px;background:#c8c8c8"></div><div class="t c" style="left:428.68px;top:7.20px;width:8.76px;font-size:6.3px;color:#1a1a1a">S</div><div class="a" style="left:436.94px;top:7.80px;width:0.8px;height:7.50px;background:#c8c8c8"></div><div class="t c" style="left:437.44px;top:7.20px;width:8.76px;font-size:6.3px;color:#1a1a1a">S</div><div class="a" style="left:445.70px;top:7.80px;width:0.8px;height:7.50px;background:#c8c8c8"></div><div class="t c" style="left:446.20px;top:7.20px;width:8.76px;font-size:6.3px;color:#1a1a1a">M</div><div class="a" style="left:454.46px;top:7.80px;width:0.8px;height:7.50px;background:#c8c8c8"></div><div class="t c" style="left:454.96px;top:7.20px;width:8.76px;font-size:6.3px;color:#1a1a1a">T</div><div class="a" style="left:463.22px;top:7.80px;width:0.8px;height:7.50px;background:#c8c8c8"></div><div class="t c" style="left:463.72px;top:7.20px;width:8.76px;font-size:6.3px;color:#1a1a1a">W</div><div class="a" style="left:471.98px;top:7.80px;width:0.8px;height:7.50px;background:#c8c8c8"></div><div class="t c" style="left:472.48px;top:7.20px;width:8.76px;font-size:6.3px;color:#1a1a1a">T</div><div class="a" style="left:480.74px;top:7.80px;width:0.8px;height:7.50px;background:#c8c8c8"></div><div class="t c" style="left:481.24px;top:7.20px;width:8.76px;font-size:6.3px;color:#1a1a1a">F</div><div class="a" style="left:489.50px;top:7.80px;width:0.8px;height:7.50px;background:#c8c8c8"></div><div class="t c" style="left:490.00px;top:7.20px;width:8.76px;font-size:6.3px;color:#1a1a1a">S</div><div class="a" style="left:498.26px;top:7.80px;width:0.8px;height:7.50px;background:#c8c8c8"></div><div class="t c" style="left:498.76px;top:7.20px;width:8.76px;font-size:6.3px;color:#1a1a1a">S</div><div class="a" style="left:507.02px;top:7.80px;width:0.8px;height:7.50px;background:#c8c8c8"></div><div class="t c" style="left:507.52px;top:7.20px;width:8.76px;font-size:6.3px;color:#1a1a1a">M</div><div class="a" style="left:515.78px;top:7.80px;width:0.8px;height:7.50px;background:#c8c8c8"></div><div class="t c" style="left:516.28px;top:7.20px;width:8.76px;font-size:6.3px;color:#1a1a1a">T</div><div class="a" style="left:524.54px;top:7.80px;width:0.8px;height:7.50px;background:#c8c8c8"></div><div class="t c" style="left:525.04px;top:7.20px;width:8.76px;font-size:6.3px;color:#1a1a1a">W</div><div class="a" style="left:533.30px;top:7.80px;width:0.8px;height:7.50px;background:#c8c8c8"></div><div class="t c" style="left:533.80px;top:7.20px;width:8.76px;font-size:6.3px;color:#1a1a1a">T</div><div class="a" style="left:542.06px;top:7.80px;width:0.8px;height:7.50px;background:#c8c8c8"></div><div class="t c" style="left:542.56px;top:7.20px;width:8.76px;font-size:6.3px;color:#1a1a1a">F</div><div class="a" style="left:550.82px;top:7.80px;width:0.8px;height:7.50px;background:#c8c8c8"></div><div class="t c" style="left:551.32px;top:7.20px;width:8.76px;font-size:6.3px;color:#1a1a1a">S</div><div class="a" style="left:559.58px;top:7.80px;width:0.8px;height:7.50px;background:#c8c8c8"></div><div class="t c" style="left:560.08px;top:7.20px;width:8.76px;font-size:6.3px;color:#1a1a1a">S</div><div class="a" style="left:568.34px;top:7.80px;width:0.8px;height:7.50px;background:#c8c8c8"></div><div class="t c" style="left:568.84px;top:7.20px;width:8.76px;font-size:6.3px;color:#1a1a1a">M</div><div class="a" style="left:577.10px;top:7.80px;width:0.8px;height:7.50px;background:#c8c8c8"></div><div class="t c" style="left:577.60px;top:7.20px;width:8.76px;font-size:6.3px;color:#1a1a1a">T</div><div class="a" style="left:585.86px;top:7.80px;width:0.8px;height:7.50px;background:#c8c8c8"></div><div class="t c" style="left:586.36px;top:7.20px;width:8.76px;font-size:6.3px;color:#1a1a1a">W</div><div class="a" style="left:594.62px;top:7.80px;width:0.8px;height:7.50px;background:#c8c8c8"></div><div class="t c" style="left:595.12px;top:7.20px;width:8.76px;font-size:6.3px;color:#1a1a1a">T</div><div class="a" style="left:603.38px;top:7.80px;width:0.8px;height:7.50px;background:#c8c8c8"></div><div class="t c" style="left:603.88px;top:7.20px;width:8.76px;font-size:6.3px;color:#1a1a1a">F</div><div class="a" style="left:612.14px;top:7.80px;width:0.8px;height:7.50px;background:#c8c8c8"></div><div class="t c" style="left:612.64px;top:7.20px;width:8.76px;font-size:6.3px;color:#1a1a1a">S</div>
</div>
<div class="a" style="left:910.6px;top:66.0px;width:9.399999999999977px;height:470.0px;background:#eeeeee;border-left:0.6px solid #d8d8d8"></div>
<svg class="a" style="left:913.4px;top:69.5px" width="4" height="3" viewBox="0 0 4 3"><path d="M0 3h4L2 0.5z" fill="#222"/></svg>
<div class="a" style="left:911.4px;top:75.6px;width:8px;height:8.4px;background:linear-gradient(90deg,#fbfbfb,#e2e2e2);border:0.7px solid #9a9a9a;border-radius:1.2px"></div>
<svg class="a" style="left:913.4px;top:525.5px" width="4" height="3" viewBox="0 0 4 3"><path d="M0 0h4L2 2.5z" fill="#222"/></svg>
<div class="a" style="left:9px;top:536px;width:911px;height:10px;background:#efefef"></div>
<div class="a" style="left:9px;top:536px;width:911px;height:0.6px;background:#dcdcdc"></div>
<svg class="a" style="left:12.5px;top:539.5px" width="3" height="4" viewBox="0 0 3 4"><path d="M3 0v4L0.5 2z" fill="#222"/></svg>
<div class="a" style="left:19.3px;top:537.2px;width:7.8px;height:8px;background:linear-gradient(#fbfbfb,#dedede);border:0.7px solid #9a9a9a;border-radius:1.2px"></div>
<svg class="a" style="left:348.5px;top:539.5px" width="3" height="4" viewBox="0 0 3 4"><path d="M0 0v4L2.5 2z" fill="#222"/></svg>
<div class="a" style="left:355px;top:536px;width:1.8000000000000114px;height:10px;background:#e8e8e8"></div>
<svg class="a" style="left:361.5px;top:539.5px" width="3" height="4" viewBox="0 0 3 4"><path d="M3 0v4L0.5 2z" fill="#222"/></svg>
<div class="a" style="left:428.3px;top:537.2px;width:9px;height:8px;background:linear-gradient(#fbfbfb,#dedede);border:0.7px solid #9a9a9a;border-radius:1.2px"></div>
<svg class="a" style="left:904.5px;top:539.5px" width="3" height="4" viewBox="0 0 3 4"><path d="M0 0v4L2.5 2z" fill="#222"/></svg>
<div class="a" style="left:0;top:545.4px;width:920px;height:2.6px;background:linear-gradient(#dcdcdc,#ececec)"></div>
<div class="a" style="left:911.6px;top:534.8px;width:8px;height:0.8px;background:#777"></div>
<svg class="a" style="left:911px;top:539px" width="9" height="9" viewBox="0 0 9 9"><path d="M8.5 2L2 8.5M8.5 5L5 8.5M8.5 8L8 8.5" stroke="#a8a8a8" stroke-width="0.8"/></svg>
</body></html>
